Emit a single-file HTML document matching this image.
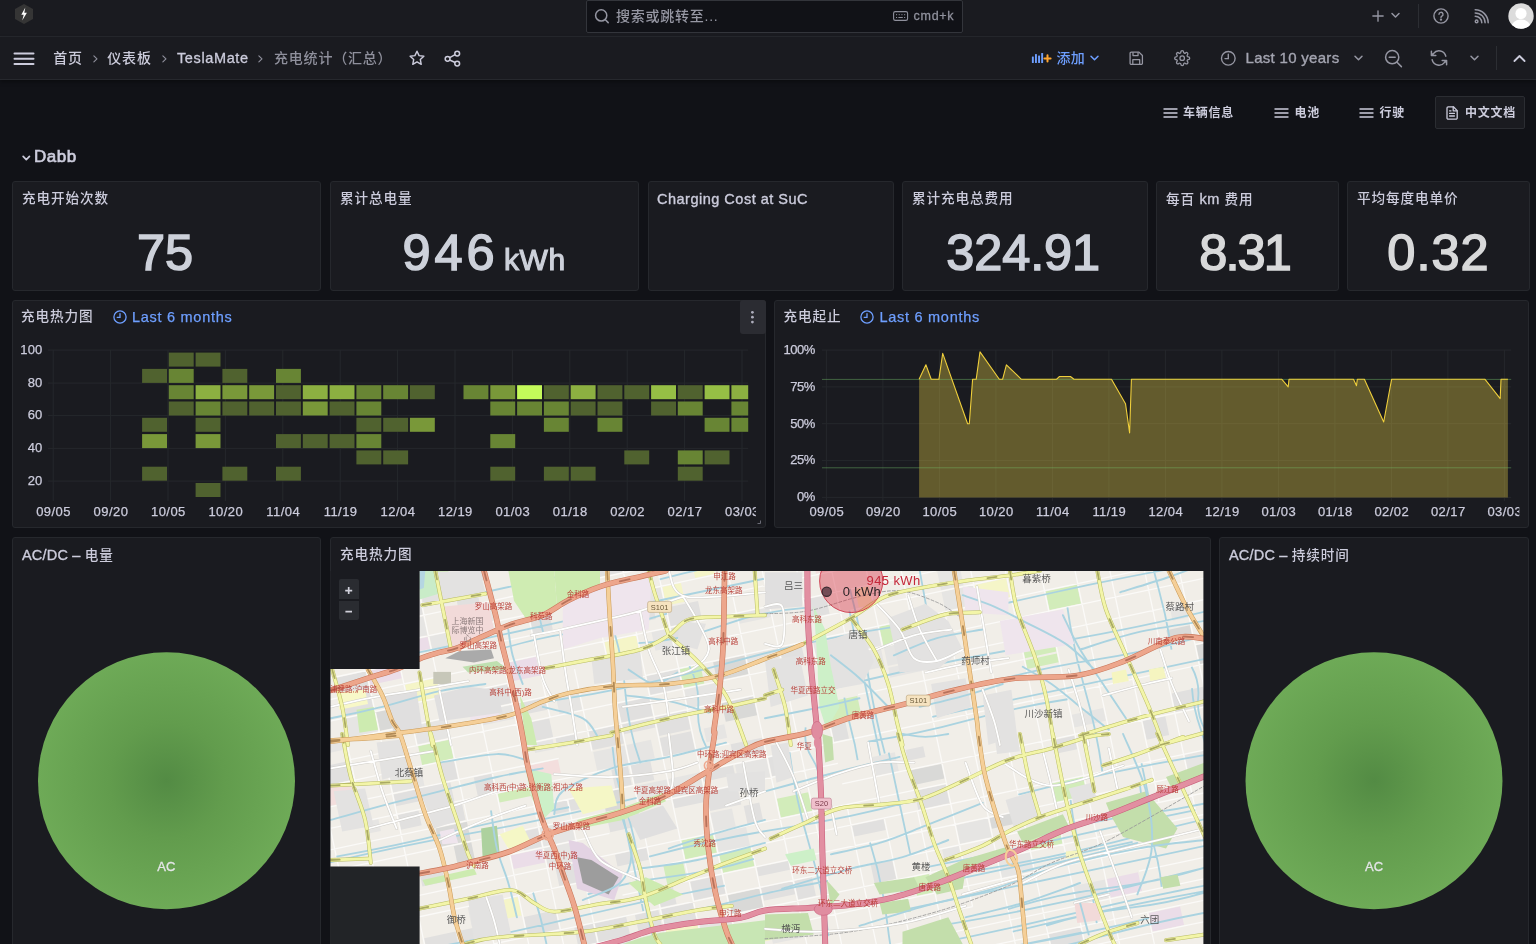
<!DOCTYPE html>
<html lang="zh">
<head>
<meta charset="utf-8">
<title>充电统计（汇总） - TeslaMate - Grafana</title>
<style>
*{box-sizing:border-box;margin:0;padding:0}
html,body{width:1536px;height:944px;overflow:hidden;background:#111217;color:#ccccdc;
  font-family:"Liberation Sans","Noto Sans CJK SC",sans-serif;font-size:14px}
#root{position:absolute;left:0;top:0;width:1536px;height:944px;will-change:transform}
.abs{position:absolute}
#top{position:absolute;left:0;top:0;width:1536px;height:37px;background:#1a1b20;border-bottom:1px solid #26282d}
#bar2{position:absolute;left:0;top:37px;width:1536px;height:43px;background:#1a1b20;border-bottom:1px solid #26282d;box-shadow:0 2px 4px rgba(0,0,0,.35)}
.t{position:absolute;white-space:nowrap;line-height:20px}
.panel{position:absolute;background:#1a1b20;border:1px solid #26282d;border-radius:3px}
.ptitle{position:absolute;left:9px;top:7px;font-size:13.6px;letter-spacing:.9px;font-weight:500;line-height:20px;white-space:nowrap;color:#ccccdc}
.ptitle .l,.l{font-size:14.5px;letter-spacing:.5px;-webkit-text-stroke:.35px #ccccdc}
.big{position:absolute;white-space:nowrap;color:#cdd1da;-webkit-text-stroke:1.5px #cdd1da}
svg{position:absolute;overflow:visible}
</style>
</head>
<body>
<div id="root">
<!--TOPBAR-->
<div id="top">
 <svg style="left:15px;top:4px" width="18" height="20" viewBox="0 0 18 20"><path d="M9 0 L18 5 V15 L9 20 L0 15 V5 Z" fill="#353535"/><path d="M10.3 3.4 L6.3 10.7 H8.7 L7.2 16.6 L11.9 8.7 H9.3 Z" fill="#fff"/></svg>
 <div class="abs" style="left:586px;top:0;width:377px;height:33px;background:#111217;border:1px solid #33353b;border-radius:2px"></div>
 <svg style="left:594px;top:8px" width="16" height="16" viewBox="0 0 16 16" fill="none" stroke="#9596a2" stroke-width="1.5" stroke-linecap="round"><circle cx="7.2" cy="7.4" r="5.6"/><path d="M11.4 11.8 L14.2 14.6"/></svg>
 <div class="t" style="left:616px;top:6px;font-size:14px;font-weight:500;color:#9697a3;letter-spacing:.75px">搜索或跳转至...</div>
 <svg style="left:893px;top:11px" width="15.2" height="10" viewBox="0 0 15.2 10" fill="none" stroke="#8f909c" stroke-width="1.1"><rect x=".6" y=".6" width="14" height="8.8" rx="1.7"/><path d="M3 3.7h1.1M5.7 3.7h1.1M8.4 3.7h1.1M11.1 3.7h1.1M3 6.5h1.1M5.4 6.5h4.4M11.1 6.5h1.1" stroke-width="1"/></svg>
 <div class="t" style="left:913.6px;top:6px;font-size:12.5px;letter-spacing:.7px;color:#8f909c;-webkit-text-stroke:.3px #8f909c">cmd+k</div>
 <svg style="left:1372px;top:10px" width="12" height="12" viewBox="0 0 14 14" stroke="#9596a2" stroke-width="1.6" stroke-linecap="round"><path d="M7 1v12M1 7h12"/></svg>
 <svg style="left:1391px;top:12px" width="9" height="7" viewBox="0 0 9 7" fill="none" stroke="#9596a2" stroke-width="1.5" stroke-linecap="round" stroke-linejoin="round"><path d="M1 1.5 L4.5 5 L8 1.5"/></svg>
 <div class="abs" style="left:1418px;top:4px;width:1px;height:24px;background:#2c2e33"></div>
 <svg style="left:1433px;top:8px" width="16" height="16" viewBox="0 0 16 16" fill="none" stroke="#9596a2" stroke-width="1.4" stroke-linecap="round"><circle cx="8" cy="8" r="7.1"/><path d="M6 6.3 a2 2 0 1 1 2.9 1.8 c-.6.3-.9.7-.9 1.4"/><circle cx="8" cy="11.6" r=".5" fill="#9596a2"/></svg>
 <svg style="left:1474px;top:9px" width="15" height="15" viewBox="0 0 15 15" fill="none" stroke="#9596a2" stroke-width="1.5" stroke-linecap="round"><circle cx="2.6" cy="12.4" r="1.3"/><path d="M1.2 7.2 a6.6 6.6 0 0 1 6.6 6.6M1.2 3.9 a9.9 9.9 0 0 1 9.9 9.9M1.2 .8 a13 13 0 0 1 13 13"/></svg>
 <svg style="left:1508px;top:3px" width="26" height="26" viewBox="0 0 26 26"><defs><clipPath id="avc"><circle cx="13" cy="13" r="12.7"/></clipPath></defs><circle cx="13" cy="13" r="12.7" fill="#dcdcdc"/><g clip-path="url(#avc)" fill="#fff"><circle cx="13" cy="10.5" r="5.6"/><ellipse cx="13" cy="25" rx="10" ry="8.5"/></g></svg>
</div>
<div id="bar2">
 <svg style="left:13px;top:15px" width="22" height="14" viewBox="0 0 22 14" stroke="#ccccdc" stroke-width="2" stroke-linecap="round"><path d="M1.5 1.5h19M1.5 6.7h19M1.5 12h19"/></svg>
 <div class="t" style="left:53.3px;top:11px;font-size:14px;font-weight:500;letter-spacing:.8px">首页</div>
 <svg style="left:92.6px;top:17.6px" width="5.2" height="7.8" viewBox="0 0 6 9" fill="none" stroke="#8f909c" stroke-width="1.3" stroke-linecap="round" stroke-linejoin="round"><path d="M1 1 L4.6 4.5 L1 8"/></svg>
 <div class="t" style="left:107.3px;top:11px;font-size:14px;font-weight:500;letter-spacing:.8px">仪表板</div>
 <svg style="left:161.6px;top:17.6px" width="5.2" height="7.8" viewBox="0 0 6 9" fill="none" stroke="#8f909c" stroke-width="1.3" stroke-linecap="round" stroke-linejoin="round"><path d="M1 1 L4.6 4.5 L1 8"/></svg>
 <div class="t" style="left:177px;top:11px;font-size:14.5px;letter-spacing:.62px;-webkit-text-stroke:.3px #ccccdc">TeslaMate</div>
 <svg style="left:257.6px;top:17.6px" width="5.2" height="7.8" viewBox="0 0 6 9" fill="none" stroke="#8f909c" stroke-width="1.3" stroke-linecap="round" stroke-linejoin="round"><path d="M1 1 L4.6 4.5 L1 8"/></svg>
 <div class="t" style="left:274px;top:11px;font-size:14px;color:#8f909c;font-weight:500;letter-spacing:.8px">充电统计（汇总）</div>
 <svg style="left:409.3px;top:13.4px" width="16" height="16" viewBox="0 0 17 17" fill="none" stroke="#ccccdc" stroke-width="1.5" stroke-linejoin="round"><path d="M8.5 1.3 L10.7 6 L15.8 6.6 L12 10.1 L13 15.2 L8.5 12.6 L4 15.2 L5 10.1 L1.2 6.6 L6.3 6 Z"/></svg>
 <svg style="left:444.3px;top:12.6px" width="17" height="17" viewBox="0 0 17 17" fill="none" stroke="#ccccdc" stroke-width="1.5"><circle cx="3.6" cy="8.8" r="2.4"/><circle cx="13.2" cy="3.6" r="2.4"/><circle cx="13.2" cy="13.6" r="2.4"/><path d="M5.7 7.6 L11.1 4.7M5.7 10 L11.1 12.5"/></svg>

 <svg style="left:1031px;top:14px" width="21" height="14" viewBox="0 0 21 14"><g fill="#6e9fff"><rect x="0.9" y="5.4" width="1.9" height="6.6" rx=".5"/><rect x="4" y="3" width="1.9" height="9" rx=".5"/><rect x="7.1" y="4.6" width="1.9" height="7.4" rx=".5"/><rect x="10.2" y="2" width="1.9" height="10" rx=".5"/></g><path d="M16.5 4.3v6.2M13.4 7.4h6.2" stroke="#ffa530" stroke-width="2" stroke-linecap="round"/></svg>
 <div class="t" style="left:1056.5px;top:11px;font-size:14px;font-weight:500;color:#6e9fff;letter-spacing:.3px">添加</div>
 <svg style="left:1090px;top:18px" width="9" height="7" viewBox="0 0 9 7" fill="none" stroke="#6e9fff" stroke-width="1.5" stroke-linecap="round" stroke-linejoin="round"><path d="M1 1.2 L4.5 4.8 L8 1.2"/></svg>
 <svg style="left:1129px;top:14px" width="14.5" height="14.5" viewBox="0 0 16 16" fill="none" stroke="#9596a2" stroke-width="1.4" stroke-linejoin="round"><path d="M1.2 2.6 a1.4 1.4 0 0 1 1.4-1.4 H11 L14.8 5 V13.4 a1.4 1.4 0 0 1-1.4 1.4 H2.6 a1.4 1.4 0 0 1-1.4-1.4 Z"/><path d="M4.4 1.4 V5 H10 V1.4M4.2 14.6 V9.6 H11.8 V14.6"/></svg>
 <svg style="left:1174px;top:13px" width="16.4" height="16.4" viewBox="0 0 24 24" fill="none" stroke="#9596a2" stroke-width="1.9" stroke-linejoin="round"><circle cx="12" cy="12" r="3.3"/><path d="M19.4 15a1.65 1.65 0 0 0 .33 1.82l.06.06a2 2 0 1 1-2.83 2.83l-.06-.06a1.65 1.65 0 0 0-1.82-.33 1.65 1.65 0 0 0-1 1.51V21a2 2 0 1 1-4 0v-.09A1.65 1.65 0 0 0 9 19.4a1.65 1.65 0 0 0-1.82.33l-.06.06a2 2 0 1 1-2.83-2.83l.06-.06a1.65 1.65 0 0 0 .33-1.82 1.65 1.65 0 0 0-1.51-1H3a2 2 0 1 1 0-4h.09A1.65 1.65 0 0 0 4.6 9a1.65 1.65 0 0 0-.33-1.82l-.06-.06a2 2 0 1 1 2.83-2.83l.06.06a1.65 1.65 0 0 0 1.82.33H9a1.65 1.65 0 0 0 1-1.51V3a2 2 0 1 1 4 0v.09a1.65 1.65 0 0 0 1 1.51 1.65 1.65 0 0 0 1.82-.33l.06-.06a2 2 0 1 1 2.83 2.83l-.06.06a1.65 1.65 0 0 0-.33 1.82V9a1.65 1.65 0 0 0 1.51 1H21a2 2 0 1 1 0 4h-.09a1.65 1.65 0 0 0-1.51 1z"/></svg>
 <svg style="left:1219.8px;top:12.8px" width="16.6" height="16.6" viewBox="0 0 18 18" fill="none" stroke="#9596a2" stroke-width="1.5" stroke-linecap="round"><circle cx="9" cy="9" r="7.4"/><path d="M9 4.6 V9.3 H5.4"/></svg>
 <div class="t" style="left:1245.5px;top:11px;font-size:15px;color:#a4a5b1;letter-spacing:.3px;-webkit-text-stroke:.35px #a4a5b1">Last 10 years</div>
 <svg style="left:1354px;top:18px" width="9" height="7" viewBox="0 0 9 7" fill="none" stroke="#9596a2" stroke-width="1.5" stroke-linecap="round" stroke-linejoin="round"><path d="M1 1.2 L4.5 4.8 L8 1.2"/></svg>
 <svg style="left:1384px;top:12px" width="19" height="19" viewBox="0 0 19 19" fill="none" stroke="#9596a2" stroke-width="1.5" stroke-linecap="round"><circle cx="8.2" cy="8.2" r="6.6"/><path d="M5.2 8.2h6M13 13.2 L17.4 17.6"/></svg>
 <svg style="left:1430px;top:12px" width="18" height="18" viewBox="0 0 18 18" fill="none" stroke="#9596a2" stroke-width="1.5" stroke-linecap="round" stroke-linejoin="round"><path d="M15.8 7.2 A7 7 0 0 0 3.4 4.6 L1.6 6.4M1.4 2.2 V6.6 H5.8M2.2 10.8 A7 7 0 0 0 14.6 13.4 L16.4 11.6M16.6 15.8 V11.4 H12.2"/></svg>
 <svg style="left:1470px;top:18px" width="9" height="7" viewBox="0 0 9 7" fill="none" stroke="#9596a2" stroke-width="1.5" stroke-linecap="round" stroke-linejoin="round"><path d="M1 1.2 L4.5 4.8 L8 1.2"/></svg>
 <div class="abs" style="left:1496px;top:9px;width:1px;height:24px;background:#2c2e33"></div>
 <svg style="left:1513px;top:17px" width="13" height="9" viewBox="0 0 13 9" fill="none" stroke="#ccccdc" stroke-width="1.8" stroke-linecap="round" stroke-linejoin="round"><path d="M1.4 7 L6.5 2 L11.6 7"/></svg>
</div>
<!--/TOPBAR-->
<!--LINKS-->
<svg style="left:1163px;top:108px" width="15" height="10" viewBox="0 0 15 10" stroke="#ccccdc" stroke-width="1.4" stroke-linecap="round"><path d="M1 1h13M1 5h13M1 9h13"/></svg>
<div class="t" style="left:1183px;top:103px;font-size:12px;font-weight:bold;letter-spacing:.75px">车辆信息</div>
<svg style="left:1274px;top:108px" width="15" height="10" viewBox="0 0 15 10" stroke="#ccccdc" stroke-width="1.4" stroke-linecap="round"><path d="M1 1h13M1 5h13M1 9h13"/></svg>
<div class="t" style="left:1294.5px;top:103px;font-size:12px;font-weight:bold;letter-spacing:.75px">电池</div>
<svg style="left:1359px;top:108px" width="15" height="10" viewBox="0 0 15 10" stroke="#ccccdc" stroke-width="1.4" stroke-linecap="round"><path d="M1 1h13M1 5h13M1 9h13"/></svg>
<div class="t" style="left:1379.5px;top:103px;font-size:12px;font-weight:bold;letter-spacing:.75px">行驶</div>
<div class="abs" style="left:1435px;top:96px;width:90px;height:33px;background:#1a1b20;border:1px solid #2b2d32;border-radius:2px"></div>
<svg style="left:1446px;top:106px" width="12" height="14" viewBox="0 0 12 14" fill="none" stroke="#ccccdc" stroke-width="1.3" stroke-linejoin="round" stroke-linecap="round"><path d="M2.2.8 H7.4 L11.2 4.6 V12 a1.2 1.2 0 0 1-1.2 1.2 H2.2 A1.2 1.2 0 0 1 1 12 V2 A1.2 1.2 0 0 1 2.2.8 Z"/><path d="M7.2 1 V4.8 H11M3.6 7.4h4.8M3.6 10h4.8M3.6 4.8h1.4"/></svg>
<div class="t" style="left:1465px;top:103px;font-size:12px;font-weight:bold;letter-spacing:.75px">中文文档</div>
<svg style="left:21.6px;top:155.3px" width="8.6" height="6.7" viewBox="0 0 9 7" fill="none" stroke="#ccccdc" stroke-width="1.8" stroke-linecap="round" stroke-linejoin="round"><path d="M1.2 1.4 L4.5 4.8 L7.8 1.4"/></svg>
<div class="t" style="left:34px;top:146px;font-size:17px;letter-spacing:.5px;-webkit-text-stroke:.65px #ccccdc;line-height:22px">Dabb</div>
<!--/LINKS-->
<!--STATS-->
<div class="panel" style="left:12px;top:181px;width:309px;height:110px"><div class="ptitle">充电开始次数</div><div class="big" style="left:124px;top:41px;font-size:50.5px;line-height:60px">75</div></div>
<div class="panel" style="left:330px;top:181px;width:309px;height:110px"><div class="ptitle">累计总电量</div><div class="big" style="left:71.5px;top:41px;font-size:50.5px;line-height:60px;letter-spacing:3.95px">946</div><div class="big" style="left:173px;top:40px;font-size:30px;letter-spacing:.6px;line-height:60px;padding-top:8px;-webkit-text-stroke-width:1.1px">kWh</div></div>
<div class="panel" style="left:648px;top:181px;width:246px;height:110px"><div class="ptitle" style="left:8px"><span class="l">Charging Cost at SuC</span></div></div>
<div class="panel" style="left:902px;top:181px;width:246px;height:110px"><div class="ptitle">累计充电总费用</div><div class="big" style="left:43.2px;top:41px;font-size:50.5px;line-height:60px;letter-spacing:-.1px">324.91</div></div>
<div class="panel" style="left:1156px;top:181px;width:183px;height:110px"><div class="ptitle">每百<span class="l"> km </span>费用</div><div class="big" style="left:42.3px;top:41px;font-size:50.5px;line-height:60px;letter-spacing:-1.9px;color:#d8d9da;-webkit-text-stroke-color:#d8d9da">8.31</div></div>
<div class="panel" style="left:1347px;top:181px;width:183px;height:110px"><div class="ptitle">平均每度电单价</div><div class="big" style="left:39.3px;top:41px;font-size:50.5px;line-height:60px;letter-spacing:1px;color:#d8d9da;-webkit-text-stroke-color:#d8d9da">0.32</div></div>
<!--/STATS-->
<!--ROW2-->
<div class="panel" style="left:12px;top:299.5px;width:754px;height:228.5px"></div>
<div class="t" style="left:21px;top:307px;font-size:13.6px;letter-spacing:.9px;font-weight:500">充电热力图</div>
<svg style="left:112.5px;top:310px" width="14" height="14" viewBox="0 0 14 14" fill="none" stroke="#6e9fff" stroke-width="1.3" stroke-linecap="round"><circle cx="7" cy="7" r="6.1"/><path d="M7 3.6V7.3H4.2"/></svg>
<div class="t" style="left:132px;top:306.5px;font-size:14.5px;color:#6e9fff;letter-spacing:.72px;-webkit-text-stroke:.25px #6e9fff">Last 6 months</div>
<div class="abs" style="left:740px;top:299.6px;width:26px;height:34.2px;background:#2b2c32;border-radius:3px"></div>
<svg style="left:750px;top:309px" width="5" height="16" viewBox="0 0 5 16" fill="#adadbc"><circle cx="2.4" cy="3.3" r="1.4"/><circle cx="2.4" cy="8.2" r="1.4"/><circle cx="2.4" cy="13.1" r="1.4"/></svg>
<div class="panel" style="left:774px;top:299.5px;width:755px;height:228.5px"></div>
<div class="t" style="left:783.5px;top:307px;font-size:13.6px;letter-spacing:.9px;font-weight:500">充电起止</div>
<svg style="left:860px;top:310px" width="14" height="14" viewBox="0 0 14 14" fill="none" stroke="#6e9fff" stroke-width="1.3" stroke-linecap="round"><circle cx="7" cy="7" r="6.1"/><path d="M7 3.6V7.3H4.2"/></svg>
<div class="t" style="left:879.5px;top:306.5px;font-size:14.5px;color:#6e9fff;letter-spacing:.72px;-webkit-text-stroke:.25px #6e9fff">Last 6 months</div>
<svg style="left:0;top:0" width="1536" height="944" viewBox="0 0 1536 944">
<defs><clipPath id="hmclip"><rect x="48" y="345" width="700.2" height="160"/></clipPath><clipPath id="hmx"><rect x="20" y="500" width="735.8" height="26"/></clipPath><clipPath id="tsx"><rect x="790" y="500" width="729.3" height="26"/></clipPath></defs>
<path d="M48 350.1H748.2 M48 383.1H748.2 M48 415.6H748.2 M48 448.4H748.2 M48 481.1H748.2 M53.2 350V501 M110.6 350V501 M168.0 350V501 M225.4 350V501 M282.8 350V501 M340.2 350V501 M397.6 350V501 M455.0 350V501 M512.4 350V501 M569.8 350V501 M627.2 350V501 M684.6 350V501 M742.0 350V501" stroke="#25282c" stroke-width="1" fill="none"/>
<g clip-path="url(#hmclip)">
<rect x="168.8" y="352.6" width="24.9" height="14" fill="#50622f"/>
<rect x="195.6" y="352.6" width="24.9" height="14" fill="#50622f"/>
<rect x="142.1" y="368.9" width="24.9" height="14" fill="#50622f"/>
<rect x="168.8" y="368.9" width="24.9" height="14" fill="#688534"/>
<rect x="222.4" y="368.9" width="24.9" height="14" fill="#50622f"/>
<rect x="276.0" y="368.9" width="24.9" height="14" fill="#688534"/>
<rect x="168.8" y="385.2" width="24.9" height="14" fill="#688534"/>
<rect x="195.6" y="385.2" width="24.9" height="14" fill="#8cb041"/>
<rect x="222.4" y="385.2" width="24.9" height="14" fill="#799839"/>
<rect x="249.2" y="385.2" width="24.9" height="14" fill="#799839"/>
<rect x="276.0" y="385.2" width="24.9" height="14" fill="#50622f"/>
<rect x="302.8" y="385.2" width="24.9" height="14" fill="#8cb041"/>
<rect x="329.6" y="385.2" width="24.9" height="14" fill="#8cb041"/>
<rect x="356.4" y="385.2" width="24.9" height="14" fill="#688534"/>
<rect x="383.2" y="385.2" width="24.9" height="14" fill="#688534"/>
<rect x="409.9" y="385.2" width="24.9" height="14" fill="#50622f"/>
<rect x="463.5" y="385.2" width="24.9" height="14" fill="#688534"/>
<rect x="490.3" y="385.2" width="24.9" height="14" fill="#799839"/>
<rect x="517.1" y="385.2" width="24.9" height="14" fill="#c4fa5a"/>
<rect x="543.9" y="385.2" width="24.9" height="14" fill="#50622f"/>
<rect x="570.7" y="385.2" width="24.9" height="14" fill="#8cb041"/>
<rect x="597.5" y="385.2" width="24.9" height="14" fill="#50622f"/>
<rect x="624.3" y="385.2" width="24.9" height="14" fill="#50622f"/>
<rect x="651.1" y="385.2" width="24.9" height="14" fill="#96bf45"/>
<rect x="677.8" y="385.2" width="24.9" height="14" fill="#50622f"/>
<rect x="704.6" y="385.2" width="24.9" height="14" fill="#96bf45"/>
<rect x="731.4" y="385.2" width="24.9" height="14" fill="#8cb041"/>
<rect x="168.8" y="401.5" width="24.9" height="14" fill="#50622f"/>
<rect x="195.6" y="401.5" width="24.9" height="14" fill="#688534"/>
<rect x="222.4" y="401.5" width="24.9" height="14" fill="#50622f"/>
<rect x="249.2" y="401.5" width="24.9" height="14" fill="#50622f"/>
<rect x="276.0" y="401.5" width="24.9" height="14" fill="#50622f"/>
<rect x="302.8" y="401.5" width="24.9" height="14" fill="#799839"/>
<rect x="329.6" y="401.5" width="24.9" height="14" fill="#50622f"/>
<rect x="356.4" y="401.5" width="24.9" height="14" fill="#688534"/>
<rect x="490.3" y="401.5" width="24.9" height="14" fill="#688534"/>
<rect x="517.1" y="401.5" width="24.9" height="14" fill="#688534"/>
<rect x="543.9" y="401.5" width="24.9" height="14" fill="#688534"/>
<rect x="570.7" y="401.5" width="24.9" height="14" fill="#50622f"/>
<rect x="597.5" y="401.5" width="24.9" height="14" fill="#50622f"/>
<rect x="651.1" y="401.5" width="24.9" height="14" fill="#50622f"/>
<rect x="677.8" y="401.5" width="24.9" height="14" fill="#688534"/>
<rect x="731.4" y="401.5" width="24.9" height="14" fill="#688534"/>
<rect x="142.1" y="417.8" width="24.9" height="14" fill="#50622f"/>
<rect x="195.6" y="417.8" width="24.9" height="14" fill="#50622f"/>
<rect x="356.4" y="417.8" width="24.9" height="14" fill="#50622f"/>
<rect x="383.2" y="417.8" width="24.9" height="14" fill="#50622f"/>
<rect x="409.9" y="417.8" width="24.9" height="14" fill="#799839"/>
<rect x="543.9" y="417.8" width="24.9" height="14" fill="#688534"/>
<rect x="597.5" y="417.8" width="24.9" height="14" fill="#688534"/>
<rect x="704.6" y="417.8" width="24.9" height="14" fill="#688534"/>
<rect x="731.4" y="417.8" width="24.9" height="14" fill="#688534"/>
<rect x="142.1" y="434.1" width="24.9" height="14" fill="#799839"/>
<rect x="195.6" y="434.1" width="24.9" height="14" fill="#799839"/>
<rect x="276.0" y="434.1" width="24.9" height="14" fill="#50622f"/>
<rect x="302.8" y="434.1" width="24.9" height="14" fill="#50622f"/>
<rect x="329.6" y="434.1" width="24.9" height="14" fill="#50622f"/>
<rect x="356.4" y="434.1" width="24.9" height="14" fill="#688534"/>
<rect x="490.3" y="434.1" width="24.9" height="14" fill="#688534"/>
<rect x="356.4" y="450.4" width="24.9" height="14" fill="#50622f"/>
<rect x="383.2" y="450.4" width="24.9" height="14" fill="#50622f"/>
<rect x="624.3" y="450.4" width="24.9" height="14" fill="#50622f"/>
<rect x="677.8" y="450.4" width="24.9" height="14" fill="#688534"/>
<rect x="704.6" y="450.4" width="24.9" height="14" fill="#50622f"/>
<rect x="142.1" y="466.7" width="24.9" height="14" fill="#50622f"/>
<rect x="222.4" y="466.7" width="24.9" height="14" fill="#50622f"/>
<rect x="276.0" y="466.7" width="24.9" height="14" fill="#50622f"/>
<rect x="490.3" y="466.7" width="24.9" height="14" fill="#50622f"/>
<rect x="543.9" y="466.7" width="24.9" height="14" fill="#50622f"/>
<rect x="570.7" y="466.7" width="24.9" height="14" fill="#50622f"/>
<rect x="677.8" y="466.7" width="24.9" height="14" fill="#50622f"/>
<rect x="195.6" y="483.0" width="24.9" height="14" fill="#50622f"/>
</g>
<text x="42.3" y="353.9" text-anchor="end" font-size="13" fill="#ccccdc" letter-spacing=".1" stroke="#ccccdc" stroke-width=".25">100</text>
<text x="42.3" y="386.9" text-anchor="end" font-size="13" fill="#ccccdc" letter-spacing=".1" stroke="#ccccdc" stroke-width=".25">80</text>
<text x="42.3" y="419.4" text-anchor="end" font-size="13" fill="#ccccdc" letter-spacing=".1" stroke="#ccccdc" stroke-width=".25">60</text>
<text x="42.3" y="452.2" text-anchor="end" font-size="13" fill="#ccccdc" letter-spacing=".1" stroke="#ccccdc" stroke-width=".25">40</text>
<text x="42.3" y="484.9" text-anchor="end" font-size="13" fill="#ccccdc" letter-spacing=".1" stroke="#ccccdc" stroke-width=".25">20</text>
<g clip-path="url(#hmx)">
<text x="53.6" y="515.8" text-anchor="middle" font-size="13" fill="#ccccdc" letter-spacing=".45" stroke="#ccccdc" stroke-width=".25">09/05</text>
<text x="111.0" y="515.8" text-anchor="middle" font-size="13" fill="#ccccdc" letter-spacing=".45" stroke="#ccccdc" stroke-width=".25">09/20</text>
<text x="168.4" y="515.8" text-anchor="middle" font-size="13" fill="#ccccdc" letter-spacing=".45" stroke="#ccccdc" stroke-width=".25">10/05</text>
<text x="225.8" y="515.8" text-anchor="middle" font-size="13" fill="#ccccdc" letter-spacing=".45" stroke="#ccccdc" stroke-width=".25">10/20</text>
<text x="283.2" y="515.8" text-anchor="middle" font-size="13" fill="#ccccdc" letter-spacing=".45" stroke="#ccccdc" stroke-width=".25">11/04</text>
<text x="340.6" y="515.8" text-anchor="middle" font-size="13" fill="#ccccdc" letter-spacing=".45" stroke="#ccccdc" stroke-width=".25">11/19</text>
<text x="398.0" y="515.8" text-anchor="middle" font-size="13" fill="#ccccdc" letter-spacing=".45" stroke="#ccccdc" stroke-width=".25">12/04</text>
<text x="455.4" y="515.8" text-anchor="middle" font-size="13" fill="#ccccdc" letter-spacing=".45" stroke="#ccccdc" stroke-width=".25">12/19</text>
<text x="512.8" y="515.8" text-anchor="middle" font-size="13" fill="#ccccdc" letter-spacing=".45" stroke="#ccccdc" stroke-width=".25">01/03</text>
<text x="570.2" y="515.8" text-anchor="middle" font-size="13" fill="#ccccdc" letter-spacing=".45" stroke="#ccccdc" stroke-width=".25">01/18</text>
<text x="627.6" y="515.8" text-anchor="middle" font-size="13" fill="#ccccdc" letter-spacing=".45" stroke="#ccccdc" stroke-width=".25">02/02</text>
<text x="685.0" y="515.8" text-anchor="middle" font-size="13" fill="#ccccdc" letter-spacing=".45" stroke="#ccccdc" stroke-width=".25">02/17</text>
<text x="742.4" y="515.8" text-anchor="middle" font-size="13" fill="#ccccdc" letter-spacing=".45" stroke="#ccccdc" stroke-width=".25">03/03</text>
</g>
<path d="M757.5 523.5H760.5V520.5" stroke="#6a6b75" stroke-width="1" fill="none"/>
<path d="M822 350.1H1511.2 M822 386.9H1511.2 M822 423.7H1511.2 M822 460.6H1511.2 M822 497.4H1511.2 M826.4 350V501 M882.9 350V501 M939.4 350V501 M995.9 350V501 M1052.4 350V501 M1108.9 350V501 M1165.4 350V501 M1221.9 350V501 M1278.4 350V501 M1334.9 350V501 M1391.4 350V501 M1447.9 350V501 M1504.4 350V501" stroke="#25282c" stroke-width="1" fill="none"/>
<path d="M919.1 379.3 L925.9 364.8 L931.2 379.3 L938.9 379.3 L942.7 353.4 L967.6 423.7 L969.3 423.7 L972.6 379.3 L976.2 379.3 L980.0 351.9 L999.3 379.3 L1002.6 379.3 L1006.4 364.8 L1021.4 379.3 L1056.4 379.3 L1059.5 376.5 L1070.4 376.5 L1074.0 379.3 L1111.5 379.3 L1125.5 403.7 L1129.6 432.9 L1131.4 379.3 L1281.9 379.3 L1288.2 386.9 L1289.0 379.3 L1353.5 379.3 L1356.5 385.7 L1357.3 379.3 L1364.4 379.3 L1383.7 422.0 L1391.6 379.3 L1485.0 379.3 L1500.2 398.6 L1501.0 379.3 L1507.9 379.3 L1507.9 497.4 L919.1 497.4 Z" fill="rgba(250,222,72,0.33)" stroke="none"/>
<path d="M822 379.4H1511.2M822 467.8H1511.2" stroke="rgba(115,191,105,0.45)" stroke-width="1" fill="none"/>
<path d="M919.1 379.3 L925.9 364.8 L931.2 379.3 L938.9 379.3 L942.7 353.4 L967.6 423.7 L969.3 423.7 L972.6 379.3 L976.2 379.3 L980.0 351.9 L999.3 379.3 L1002.6 379.3 L1006.4 364.8 L1021.4 379.3 L1056.4 379.3 L1059.5 376.5 L1070.4 376.5 L1074.0 379.3 L1111.5 379.3 L1125.5 403.7 L1129.6 432.9 L1131.4 379.3 L1281.9 379.3 L1288.2 386.9 L1289.0 379.3 L1353.5 379.3 L1356.5 385.7 L1357.3 379.3 L1364.4 379.3 L1383.7 422.0 L1391.6 379.3 L1485.0 379.3 L1500.2 398.6 L1501.0 379.3 L1507.9 379.3" fill="none" stroke="#efcf3c" stroke-width="1.1" stroke-linejoin="round"/>
<text x="814.9" y="353.9" text-anchor="end" font-size="13" fill="#ccccdc" letter-spacing="-.45" stroke="#ccccdc" stroke-width=".25">100%</text>
<text x="814.9" y="390.7" text-anchor="end" font-size="13" fill="#ccccdc" letter-spacing="-.45" stroke="#ccccdc" stroke-width=".25">75%</text>
<text x="814.9" y="427.5" text-anchor="end" font-size="13" fill="#ccccdc" letter-spacing="-.45" stroke="#ccccdc" stroke-width=".25">50%</text>
<text x="814.9" y="464.4" text-anchor="end" font-size="13" fill="#ccccdc" letter-spacing="-.45" stroke="#ccccdc" stroke-width=".25">25%</text>
<text x="814.9" y="501.2" text-anchor="end" font-size="13" fill="#ccccdc" letter-spacing="-.45" stroke="#ccccdc" stroke-width=".25">0%</text>
<g clip-path="url(#tsx)">
<text x="826.8" y="515.8" text-anchor="middle" font-size="13" fill="#ccccdc" letter-spacing=".45" stroke="#ccccdc" stroke-width=".25">09/05</text>
<text x="883.3" y="515.8" text-anchor="middle" font-size="13" fill="#ccccdc" letter-spacing=".45" stroke="#ccccdc" stroke-width=".25">09/20</text>
<text x="939.8" y="515.8" text-anchor="middle" font-size="13" fill="#ccccdc" letter-spacing=".45" stroke="#ccccdc" stroke-width=".25">10/05</text>
<text x="996.3" y="515.8" text-anchor="middle" font-size="13" fill="#ccccdc" letter-spacing=".45" stroke="#ccccdc" stroke-width=".25">10/20</text>
<text x="1052.8" y="515.8" text-anchor="middle" font-size="13" fill="#ccccdc" letter-spacing=".45" stroke="#ccccdc" stroke-width=".25">11/04</text>
<text x="1109.3" y="515.8" text-anchor="middle" font-size="13" fill="#ccccdc" letter-spacing=".45" stroke="#ccccdc" stroke-width=".25">11/19</text>
<text x="1165.8" y="515.8" text-anchor="middle" font-size="13" fill="#ccccdc" letter-spacing=".45" stroke="#ccccdc" stroke-width=".25">12/04</text>
<text x="1222.3" y="515.8" text-anchor="middle" font-size="13" fill="#ccccdc" letter-spacing=".45" stroke="#ccccdc" stroke-width=".25">12/19</text>
<text x="1278.8" y="515.8" text-anchor="middle" font-size="13" fill="#ccccdc" letter-spacing=".45" stroke="#ccccdc" stroke-width=".25">01/03</text>
<text x="1335.3" y="515.8" text-anchor="middle" font-size="13" fill="#ccccdc" letter-spacing=".45" stroke="#ccccdc" stroke-width=".25">01/18</text>
<text x="1391.8" y="515.8" text-anchor="middle" font-size="13" fill="#ccccdc" letter-spacing=".45" stroke="#ccccdc" stroke-width=".25">02/02</text>
<text x="1448.3" y="515.8" text-anchor="middle" font-size="13" fill="#ccccdc" letter-spacing=".45" stroke="#ccccdc" stroke-width=".25">02/17</text>
<text x="1504.8" y="515.8" text-anchor="middle" font-size="13" fill="#ccccdc" letter-spacing=".45" stroke="#ccccdc" stroke-width=".25">03/03</text>
</g>
</svg>
<!--/ROW2-->
<!--ROW3-->
<div class="panel" style="left:12px;top:536.5px;width:309px;height:420px"><div class="ptitle"><span class="l" style="letter-spacing:.2px">AC/DC – </span>电量</div></div>
<div class="panel" style="left:330px;top:536.5px;width:881px;height:420px"><div class="ptitle">充电热力图</div></div>
<div class="panel" style="left:1219px;top:536.5px;width:310px;height:420px"><div class="ptitle"><span class="l" style="letter-spacing:.2px">AC/DC – </span>持续时间</div></div>
<svg style="left:0;top:0" width="1536" height="944" viewBox="0 0 1536 944"><defs><radialGradient id="pg" cx="50%" cy="50%" r="50%"><stop offset="0" stop-color="#538b44"/><stop offset=".45" stop-color="#629c4d"/><stop offset="1" stop-color="#6eaa57"/></radialGradient></defs><circle cx="166.5" cy="780.7" r="128.5" fill="url(#pg)"/><circle cx="1374" cy="780.7" r="128.5" fill="url(#pg)"/><text x="166.3" y="870.9" text-anchor="middle" font-size="13" fill="#e4e5e8" stroke="#e4e5e8" stroke-width=".3">AC</text><text x="1374" y="870.9" text-anchor="middle" font-size="13" fill="#e4e5e8" stroke="#e4e5e8" stroke-width=".3">AC</text></svg>
<svg style="left:0;top:0" width="1536" height="944" viewBox="0 0 1536 944">
<defs><clipPath id="mapclip"><path d="M419.6 571H1203.4V944H419.6V866.4H330.5V669H419.6Z"/></clipPath><filter id="lb" x="0" y="0" width="100%" height="100%" filterUnits="userSpaceOnUse"><feGaussianBlur stdDeviation="0.3"/></filter><filter id="mb" x="0" y="0" width="100%" height="100%" filterUnits="userSpaceOnUse"><feGaussianBlur stdDeviation="0.5"/></filter></defs>
<rect x="330.5" y="571" width="89.10000000000002" height="98" fill="#1a1b20"/>
<rect x="330.5" y="866.4" width="89.10000000000002" height="77.60000000000002" fill="#222427"/>
<g clip-path="url(#mapclip)"><g filter="url(#mb)">
<rect x="328.5" y="569" width="876.9000000000001" height="377" fill="#f1eee8"/>
<g transform="rotate(-12 767 757)">
<path d="M258 506h32v12h-32z M258 527h32v12h-32z M258 548h32v19h-32z M258 569h32v19h-32z M268 674h22v19h-22z M258 716h32v19h-32z M258 947h32v12h-32z M267 968h23v11h-23z M307 611h17v19h-17z M292 632h32v19h-32z M303 821h21v10h-21z M310 842h14v11h-14z M292 884h24v19h-24z M292 926h17v9h-17z M326 527h23v19h-23z M326 548h32v19h-32z M326 674h32v19h-32z M341 716h16v19h-16z M360 590h32v19h-32z M360 611h32v19h-32z M394 548h32v11h-32z M394 716h32v12h-32z M394 737h21v15h-21z M403 800h23v12h-23z M394 863h32v19h-32z M394 905h32v19h-32z M428 506h32v10h-32z M442 527h18v19h-18z M444 695h16v19h-16z M428 716h24v19h-24z M440 737h19v19h-19z M428 863h17v19h-17z M428 968h32v13h-32z M476 716h18v19h-18z M505 506h22v19h-22z M496 527h22v19h-22z M503 632h25v19h-25z M510 779h18v19h-18z M496 863h32v19h-32z M530 653h32v12h-32z M530 674h32v19h-32z M547 758h15v11h-15z M537 821h25v19h-25z M543 884h19v19h-19z M530 947h32v19h-32z M564 506h32v19h-32z M564 569h20v19h-20z M564 695h21v10h-21z M564 758h32v11h-32z M564 884h32v19h-32z M564 905h32v19h-32z M564 926h32v19h-32z M564 947h19v14h-19z M598 695h32v19h-32z M612 737h17v19h-17z M598 779h32v19h-32z M598 821h32v12h-32z M605 884h24v19h-24z M598 926h32v19h-32z M632 527h32v19h-32z M632 569h32v19h-32z M632 674h32v19h-32z M632 695h32v10h-32z M632 737h20v19h-20z M632 863h16v19h-16z M632 884h32v19h-32z M632 968h16v19h-16z M666 590h21v9h-21z M666 653h32v19h-32z M666 695h32v19h-32z M666 716h32v19h-32z M666 779h32v9h-32z M666 863h32v19h-32z M666 926h32v19h-32z M666 968h32v19h-32z M700 590h32v19h-32z M700 611h22v12h-22z M700 758h32v10h-32z M700 779h32v19h-32z M734 506h32v19h-32z M734 527h25v19h-25z M734 737h32v14h-32z M734 800h16v19h-16z M734 863h32v9h-32z M734 884h32v13h-32z M734 947h21v19h-21z M734 968h21v19h-21z M768 758h15v19h-15z M768 884h18v19h-18z M802 653h22v19h-22z M836 611h22v19h-22z M836 737h15v19h-15z M836 842h32v11h-32z M846 884h22v19h-22z M904 779h18v11h-18z M904 821h32v19h-32z M1006 989h32v19h-32z M1049 800h23v14h-23z M1142 506h16v19h-16z M1142 800h23v19h-23z M1176 611h32v19h-32z M1176 779h32v19h-32z M1176 947h32v19h-32z M1176 968h32v14h-32z M1210 506h32v19h-32z M1244 548h32v19h-32z" fill="#e1e0df"/>
<path d="M266 611h24v10h-24z M258 779h19v12h-19z M326 926h32v10h-32z M394 632h32v19h-32z M428 758h32v19h-32z M442 779h18v19h-18z M607 506h23v14h-23z M598 527h32v11h-32z M615 569h15v19h-15z M598 758h18v19h-18z M700 884h32v19h-32z M734 653h32v19h-32z M734 695h32v19h-32z M904 800h32v15h-32z M972 863h32v11h-32z M1184 716h24v13h-24z M1210 737h32v19h-32z" fill="#d9d9d7"/>
<path d="M258 632h21v19h-21z M326 905h23v19h-23z M428 611h32v19h-32z M462 842h32v19h-32z M632 611h32v19h-32z M632 905h32v19h-32z M700 569h19v19h-19z M700 926h32v11h-32z M734 548h20v19h-20z M888 611h14v19h-14z M1006 632h32v19h-32z M1210 548h32v19h-32z" fill="#f5f5c8"/>
<path d="M258 737h32v19h-32z M258 800h32v19h-32z M258 842h32v19h-32z M292 506h32v19h-32z M292 569h32v19h-32z M292 989h20v19h-20z M326 653h32v9h-32z M326 842h32v19h-32z M360 506h14v19h-14z M360 632h32v19h-32z M360 737h14v12h-14z M360 800h32v19h-32z M360 821h17v19h-17z M360 905h32v19h-32z M360 947h32v19h-32z M394 527h32v19h-32z M394 569h32v19h-32z M394 695h32v19h-32z M442 548h18v19h-18z M428 653h32v19h-32z M443 842h17v19h-17z M462 569h32v19h-32z M462 947h32v19h-32z M496 548h32v19h-32z M496 653h32v14h-32z M513 905h15v19h-15z M541 695h20v10h-20z M530 779h32v19h-32z M530 800h32v19h-32z M573 653h23v19h-23z M598 548h32v11h-32z M598 716h32v19h-32z M632 716h25v19h-25z M632 758h32v19h-32z M632 926h32v19h-32z M666 569h32v11h-32z M680 611h18v19h-18z M666 758h32v19h-32z M666 905h32v19h-32z M666 947h32v19h-32z M700 674h32v19h-32z M711 716h21v14h-21z M700 800h22v19h-22z M700 821h32v19h-32z M734 758h32v19h-32z M734 926h32v15h-32z M768 611h32v10h-32z M768 653h32v10h-32z M836 653h32v19h-32z M836 989h32v19h-32z M870 653h32v19h-32z M878 674h23v19h-23z M870 779h23v19h-23z M904 674h32v19h-32z M904 695h32v10h-32z M919 884h17v12h-17z M938 506h32v19h-32z M938 863h32v19h-32z M972 548h32v19h-32z M972 611h23v19h-23z M972 632h32v19h-32z M972 905h32v19h-32z M1040 947h32v19h-32z M1086 569h19v19h-19z M1074 779h32v13h-32z M1176 548h16v19h-16z M1192 695h16v13h-16z M1176 842h32v19h-32z M1244 779h32v13h-32z" fill="#e6e5e3"/>
<path d="M258 863h32v19h-32z M292 779h32v19h-32z M292 863h32v11h-32z M360 569h32v11h-32z M402 947h24v19h-24z M428 674h32v19h-32z M462 506h32v19h-32z M496 569h25v12h-25z M496 737h32v9h-32z M643 842h20v19h-20z M666 506h32v19h-32z M666 821h32v19h-32z M700 653h21v19h-21z M700 842h32v19h-32z M709 968h23v19h-23z M768 800h32v19h-32z M836 716h32v19h-32z M885 905h16v19h-16z M904 653h32v19h-32z M1006 884h32v19h-32z M1040 695h32v19h-32z M1040 716h32v9h-32z M1040 842h32v19h-32z M1074 653h32v19h-32z M1244 611h32v19h-32z" fill="#d2ecba"/>
<path d="M258 905h32v19h-32z M394 590h32v14h-32z M428 569h32v12h-32z M479 905h15v19h-15z M462 926h32v19h-32z M496 800h32v14h-32z M530 611h32v19h-32z M613 947h17v19h-17z M1074 947h32v19h-32z M1108 989h32v19h-32z" fill="#ebdde8"/>
<path d="M326 695h32v19h-32z M326 947h32v14h-32z M394 926h32v19h-32z M496 926h17v11h-17z M530 716h32v14h-32z M700 506h32v19h-32z M853 569h15v19h-15z" fill="#f3dedd"/>
<path d="M257 505v63 M257 568v126 M257 694v84 M257 904v126 M291 505v84 M291 589v84 M291 673v126 M291 799v126 M291 925v84 M325 505v168 M325 673v63 M325 736v168 M325 904v84 M325 988v63 M359 505v63 M359 652v168 M359 820v84 M359 904v126 M393 505v168 M393 673v84 M393 757v63 M393 820v84 M393 904v63 M427 505v168 M427 904v63 M427 967v84 M461 505v168 M461 673v84 M461 841v84 M495 631v63 M495 694v168 M495 862v84 M529 505v126 M529 631v168 M529 799v63 M529 862v126 M529 988v63 M563 505v168 M563 757v63 M563 820v84 M563 988v84 M597 631v84 M597 946v63 M631 505v126 M631 631v84 M631 715v126 M631 841v84 M631 925v84 M665 505v84 M665 589v84 M665 673v168 M665 841v63 M665 904v126 M699 505v84 M699 589v63 M699 652v168 M699 820v63 M699 883v84 M699 967v126 M733 841v63 M767 568v126 M767 694v63 M767 757v126 M767 883v168 M801 505v126 M801 631v168 M801 799v168 M801 967v84 M835 505v84 M835 589v84 M835 673v84 M835 820v168 M835 988v84 M869 505v84 M869 589v84 M869 841v63 M869 904v126 M903 505v168 M903 841v168 M937 505v126 M937 631v126 M937 757v126 M937 883v63 M971 505v63 M971 652v126 M971 778v168 M971 946v63 M1005 568v168 M1005 736v63 M1005 799v84 M1005 883v63 M1005 946v84 M1039 505v126 M1039 631v63 M1039 694v84 M1039 778v168 M1039 946v168 M1073 505v63 M1073 568v63 M1073 631v168 M1073 799v126 M1073 925v63 M1073 988v84 M1107 589v84 M1107 673v168 M1107 988v168 M1141 505v63 M1141 568v63 M1141 631v126 M1141 757v126 M1175 505v63 M1175 652v126 M1175 778v168 M1175 946v63 M1209 505v84 M1209 589v168 M1209 757v63 M1209 988v168 M1243 505v63 M1243 694v126 M1243 820v63 M1243 883v126 M1277 505v63 M1277 568v63 M1277 631v126 M1277 757v84 M1277 841v126 M1277 967v84 M359 505h238 M597 505h170 M767 505h68 M1005 505h102 M1107 505h102 M1209 505h170 M257 526h170 M665 526h68 M733 526h102 M1073 526h238 M257 547h170 M427 547h102 M529 547h170 M869 547h102 M971 547h68 M1039 547h68 M1107 547h170 M257 568h68 M325 568h238 M563 568h68 M631 568h102 M733 568h170 M903 568h102 M1175 568h68 M1243 568h238 M257 589h102 M359 589h68 M427 589h68 M495 589h102 M767 589h68 M835 589h238 M1073 589h170 M1243 589h170 M257 610h238 M495 610h68 M563 610h238 M801 610h170 M1141 610h238 M257 631h102 M359 631h170 M733 631h68 M801 631h170 M971 631h238 M1209 631h170 M257 652h238 M495 652h238 M733 652h170 M903 652h170 M1073 652h68 M1141 652h102 M1243 652h170 M359 673h238 M597 673h238 M835 673h170 M1005 673h68 M1073 673h170 M257 694h102 M359 694h170 M529 694h238 M937 694h102 M1039 694h102 M1141 694h68 M1209 694h68 M257 715h68 M325 715h68 M393 715h170 M869 715h68 M937 715h102 M1209 715h102 M257 736h238 M495 736h102 M597 736h68 M665 736h68 M1209 736h68 M257 757h170 M427 757h102 M529 757h102 M699 757h68 M767 757h238 M1005 757h68 M1073 757h238 M257 778h68 M325 778h102 M427 778h68 M495 778h102 M597 778h238 M1243 778h68 M257 799h238 M495 799h102 M835 799h238 M1073 799h102 M1175 799h102 M257 820h102 M359 820h170 M529 820h170 M699 820h238 M1243 820h170 M257 841h238 M495 841h170 M665 841h238 M903 841h68 M971 841h102 M1073 841h102 M1175 841h170 M257 862h102 M597 862h102 M699 862h170 M869 862h238 M1107 862h102 M1209 862h238 M461 883h170 M631 883h238 M869 883h170 M1039 883h238 M257 904h102 M359 904h68 M427 904h68 M495 904h170 M665 904h238 M903 904h102 M1005 904h238 M1243 904h102 M257 925h102 M359 925h68 M597 925h170 M767 925h170 M937 925h170 M1107 925h238 M495 946h238 M835 946h102 M1107 946h68 M1175 946h238 M257 967h238 M495 967h68 M563 967h68 M631 967h102 M733 967h68 M801 967h102 M903 967h170 M1073 967h68 M1141 967h102 M1243 967h102 M903 988h68 M971 988h170 M1141 988h170 M257 1009h68 M563 1009h102 M665 1009h68 M733 1009h238 M971 1009h170 M1141 1009h238" stroke="#fbfaf8" stroke-width="1.3" fill="none"/>
<path d="M510 841q5 47 0 94t0 94 M1005 657q102 -3 204 0t204 0 M1126 862q-3 26 0 52t0 52 M325 765q60 2 119 0t119 0 M971 979q94 -3 187 0t187 0 M393 874q76 2 153 0t153 0 M869 994q60 -2 119 0t119 0 M883 610q2 42 0 84t0 84 M790 757q-4 47 0 94t0 94 M304 631q-5 16 0 32t0 32 M563 657q94 6 187 0t187 0 M631 830q68 -4 136 0t136 0 M767 536q42 3 85 0t85 0 M937 911q94 5 187 0t187 0 M631 891q42 2 85 0t85 0 M1092 673q-3 42 0 84t0 84 M665 530q51 -2 102 0t102 0 M971 956q51 -5 102 0t102 0 M618 715q-4 32 0 63t0 63 M642 589q5 37 0 74t0 74 M574 526q1 16 0 32t0 32 M1201 757q5 16 0 32t0 32 M563 854q42 -4 85 0t85 0 M665 619q42 6 85 0t85 0 M811 736q-6 16 0 32t0 32 M1197 778q-3 21 0 42t0 42 M855 715q-1 16 0 32t0 32 M1185 610q-2 32 0 63t0 63 M869 916q60 -0 119 0t119 0 M850 862q4 42 0 84t0 84 M955 526q2 42 0 84t0 84 M614 778q-0 26 0 52t0 52 M620 841q-6 42 0 84t0 84 M1005 980q42 -4 85 0t85 0 M887 778q0 26 0 52t0 52 M710 652q6 21 0 42t0 42 M529 596q42 -4 85 0t85 0 M1055 862q-3 32 0 63t0 63 M414 883q-5 37 0 74t0 74 M393 582q102 1 204 0t204 0 M1132 841q-0 16 0 32t0 32 M878 631q-0 37 0 74t0 74 M291 770q85 -3 170 0t170 0 M461 538q94 -2 187 0t187 0 M733 994q76 1 153 0t153 0 M869 763q51 3 102 0t102 0 M971 596q119 4 238 0t238 0 M1005 846q94 -4 187 0t187 0 M1005 891q60 -5 119 0t119 0 M869 974q76 2 153 0t153 0 M1005 540q110 -4 221 0t221 0 M733 536q85 -3 170 0t170 0 M903 898q68 1 136 0t136 0 M835 704q110 -5 221 0t221 0 M937 752q119 -0 238 0t238 0 M699 561q60 -3 119 0t119 0 M903 958q110 5 221 0t221 0 M903 1002q76 4 153 0t153 0 M869 935q94 0 187 0t187 0 M1005 730q51 -3 102 0t102 0" stroke="#aad3e0" stroke-width="1.8" fill="none"/>
</g>
<path d="M422.4 572.2 L479.7 570.8 L485.4 592.3 L445.3 603.8 L422.4 602.3Z" fill="#e3e2e1"/>
<path d="M419.5 570.8 L435.3 570.8 L439.0 593.7 L419.5 599.5Z" fill="#c9ecc8"/>
<path d="M419.5 570.8 L425.3 570.8 L423.8 588.0 L419.5 589.4Z" fill="#b5d6e2"/>
<path d="M443.9 606.6 L488.3 602.3 L494.0 629.5 L459.6 648.2 L451.0 648.2Z" fill="#f2dad9"/>
<path d="M508.3 570.8 L554.2 570.8 L557.0 606.6 L525.5 618.1 L514.1 600.9Z" fill="#cfecb2"/>
<path d="M554.2 570.8 L600.0 570.8 L600.0 583.7 L562.8 600.9 L557.0 606.6Z" fill="#cdebb0"/>
<path d="M562.8 603.8 L600.0 588.0 L651.6 578.0 L648.7 629.5 L600.0 638.1 L562.8 649.6Z" fill="#efe5ed"/>
<path d="M468.2 704.0 L496.9 701.1 L499.7 721.2 L471.1 724.1Z" fill="#efe5ed"/>
<path d="M591.4 658.2 L640.1 649.6 L643.0 678.2 L594.3 684.0Z" fill="#e3e2e1"/>
<path d="M433.3 671.9 L451.0 671.9 L451.0 684.0 L433.3 684.0Z" fill="#c7c7b9"/>
<path d="M356.5 709.7 L373.7 706.9 L378.0 729.8 L359.4 732.7Z" fill="#cdebb0"/>
<path d="M336.5 692.6 L365.1 689.7 L368.0 704.0 L339.3 709.7Z" fill="#f8f8c8"/>
<path d="M445.3 658.2 L459.6 651.0 L491.1 649.6 L494.0 658.2 L474.0 662.5Z" fill="#aaaaaa"/>
<path d="M462.5 666.8 L496.9 661.0 L508.3 669.6 L468.2 672.5Z" fill="#bfe0b0"/>
<path d="M680.2 620.9 L706.0 623.8 L697.4 649.6 L677.3 643.9Z" fill="#e3e2e1"/>
<path d="M519.8 695.4 L531.2 718.3 L537.0 745.0 L525.5 745.0 L522.7 718.3Z" fill="#cdebb0"/>
<path d="M382.3 695.4 L416.7 691.1 L422.4 729.8 L393.8 732.7Z" fill="#e0dfdf"/>
<path d="M433.9 695.4 L468.2 686.8 L496.9 689.7 L502.6 712.6 L439.6 721.2Z" fill="#e0dfdf"/>
<path d="M765.0 572.2 L802.2 572.2 L802.2 606.6 L765.0 609.5Z" fill="#e0dfdf"/>
<path d="M888.2 618.1 L925.4 603.8 L948.3 620.9 L962.7 649.6 L936.9 669.6 L899.6 672.5Z" fill="#e3e2e1"/>
<path d="M819.4 643.9 L859.5 629.5 L873.9 661.0 L862.4 684.0 L830.9 689.7Z" fill="#e3e2e1"/>
<path d="M962.7 586.6 L1008.5 592.3 L1008.5 615.2 L965.5 612.3Z" fill="#efe5ed"/>
<path d="M999.9 620.9 L1062.9 609.5 L1074.4 643.9 L1005.6 655.3Z" fill="#efe5ed"/>
<path d="M813.7 606.6 L825.2 629.5 L830.9 666.8 L839.5 706.9 L826.6 729.8 L819.4 706.9 L816.6 649.6Z" fill="#cdf0c8"/>
<path d="M931.1 684.0 L965.5 678.2 L971.2 706.9 L936.9 718.3Z" fill="#e3e2e1"/>
<path d="M982.7 695.4 L1011.4 689.7 L1017.1 735.5 L988.4 745.0Z" fill="#e3e2e1"/>
<path d="M765.0 661.0 L799.4 655.3 L808.0 695.4 L770.7 706.9Z" fill="#e3e2e1"/>
<path d="M1111.6 672.5 L1125.9 669.6 L1128.8 681.1 L1113.0 684.0Z" fill="#f5f5c0"/>
<path d="M1148.9 669.6 L1163.2 666.8 L1166.0 678.2 L1150.3 681.1Z" fill="#f5f5c0"/>
<path d="M333.6 791.3 L365.1 788.4 L373.7 825.7 L342.2 831.4Z" fill="#e3e2e1"/>
<path d="M376.6 742.6 L399.5 739.7 L410.9 771.2 L382.3 779.8Z" fill="#e3e2e1"/>
<path d="M419.5 788.4 L448.2 782.7 L459.6 819.9 L433.9 828.5Z" fill="#e3e2e1"/>
<path d="M439.6 831.4 L453.9 828.5 L458.2 842.9 L442.4 844.3Z" fill="#efe5ed"/>
<path d="M481.1 828.5 L496.9 825.7 L499.7 854.3 L482.6 857.2Z" fill="#add19e"/>
<path d="M499.7 834.3 L522.7 825.7 L531.2 842.9 L508.3 848.6Z" fill="#f5f7c6"/>
<path d="M525.5 768.4 L551.3 774.1 L554.2 808.5 L542.7 819.9 L531.2 797.0Z" fill="#cdf0c8"/>
<path d="M568.5 788.4 L611.5 785.6 L617.2 805.6 L582.8 814.2Z" fill="#f5f7c6"/>
<path d="M568.5 840.0 L582.8 842.9 L622.9 874.4 L614.3 900.1 L577.1 888.7Z" fill="#e3d3e3"/>
<path d="M577.1 857.2 L591.4 860.0 L618.6 877.2 L608.6 894.4 L582.8 883.0Z" fill="#9d9d9d"/>
<path d="M628.6 883.0 L645.8 877.2 L683.1 894.4 L654.4 905.9Z" fill="#cdebb0"/>
<path d="M617.2 946.0 L640.1 938.0 L660.2 932.8 L765.0 920.2 L765.0 946.0Z" fill="#c8e6b4"/>
<path d="M468.2 900.1 L502.6 894.4 L511.2 934.5 L474.0 940.2Z" fill="#e3e2e1"/>
<path d="M726.0 774.1 L765.0 771.2 L765.0 791.3 L728.9 791.3Z" fill="#e3e2e1"/>
<path d="M577.1 819.9 L620.1 808.5 L663.0 792.7 L665.9 801.3 L622.9 819.9 L579.9 828.5Z" fill="#cdebb0"/>
<path d="M628.6 817.1 L663.0 805.6 L677.3 828.5 L640.1 840.0Z" fill="#e0dfdf"/>
<path d="M422.4 880.1 L474.0 868.6 L476.8 874.4 L425.3 885.8Z" fill="#cdebb0"/>
<path d="M925.4 877.2 L962.7 860.0 L1005.6 847.2 L1008.5 854.3 L965.5 871.5 L962.7 888.7 L936.9 894.4Z" fill="#c3deab"/>
<path d="M1017.1 831.4 L1062.9 814.2 L1068.6 825.7 L1022.8 842.9Z" fill="#c3deab"/>
<path d="M1105.9 802.8 L1146.0 791.3 L1177.5 828.5 L1166.0 848.6 L1123.1 837.1 L1111.6 817.1Z" fill="#c3deab"/>
<path d="M1166.0 777.0 L1205.0 762.6 L1205.0 774.1 L1171.8 788.4Z" fill="#c3deab"/>
<path d="M873.9 883.0 L914.0 877.2 L919.7 888.7 L879.6 894.4Z" fill="#c3deab"/>
<path d="M879.6 903.0 L908.2 898.7 L911.1 911.6 L882.4 914.5Z" fill="#c3deab"/>
<path d="M822.3 734.0 L832.3 736.9 L833.8 759.8 L825.2 762.6Z" fill="#c3deab"/>
<path d="M826.6 880.1 L839.5 894.4 L830.9 905.9Z" fill="#c3deab"/>
<path d="M785.1 854.3 L813.7 848.6 L816.6 860.0 L790.8 865.8Z" fill="#cdf0c8"/>
<path d="M902.5 931.7 L948.3 917.3 L962.7 944.0 L902.5 944.0Z" fill="#c3deab"/>
<path d="M765.0 914.5 L808.0 913.0 L813.7 934.5 L765.0 940.2Z" fill="#c3deab"/>
<path d="M1160.3 877.2 L1177.5 874.4 L1180.4 885.8 L1163.2 888.7Z" fill="#c3deab"/>
<path d="M994.2 734.0 L1017.1 734.0 L1019.9 751.2 L997.0 754.1Z" fill="#e3e2e1"/>
<path d="M1005.6 799.9 L1034.3 791.3 L1040.0 817.1 L1014.2 828.5Z" fill="#e3e2e1"/>
<path d="M1068.6 788.4 L1091.6 782.7 L1097.3 799.9 L1074.4 805.6Z" fill="#e3e2e1"/>
<path d="M770.7 745.5 L787.9 742.6 L793.6 777.0 L776.5 782.7Z" fill="#e3e2e1"/>
<path d="M1074.4 903.0 L1100.2 903.0 L1100.2 920.2 L1077.2 923.1Z" fill="#f2dad9"/>
<path d="M1065.8 851.4 L1080.1 850.0 L1080.1 857.2 L1065.8 858.6Z" fill="#f5f5c0"/>
<path d="M962.7 595.2 C967.9 597.1 984.1 602.3 994.2 606.6 C1004.2 610.9 1010.9 614.7 1022.8 620.9 C1034.7 627.1 1053.8 635.7 1065.8 643.9 C1077.7 652.0 1089.7 665.3 1094.4 669.6 M1062.9 615.2 C1065.8 620.9 1073.4 638.1 1080.1 649.6 C1086.8 661.0 1095.4 672.5 1103.0 684.0 C1110.7 695.4 1122.1 712.6 1125.9 718.3 M1120.2 592.3 C1127.8 589.9 1151.9 582.7 1166.0 578.0 C1180.2 573.2 1198.5 566.0 1205.0 563.6 M1080.1 649.6 C1089.7 646.7 1116.6 637.2 1137.4 632.4 C1158.2 627.6 1193.7 622.8 1205.0 620.9 M830.9 655.3 C835.7 659.1 850.0 669.6 859.5 678.2 C869.1 686.8 883.4 702.1 888.2 706.9 M765.0 718.3 C774.5 716.4 806.5 710.2 822.3 706.9 C838.0 703.5 853.3 699.7 859.5 698.3 M893.9 655.3 C901.1 652.4 922.1 642.4 936.9 638.1 C951.7 633.8 975.1 631.0 982.7 629.5 M919.7 706.9 C927.3 705.0 951.7 699.2 965.5 695.4 C979.4 691.6 996.6 685.9 1002.8 684.0 M1022.8 666.8 C1027.6 669.6 1041.9 677.3 1051.5 684.0 C1061.0 690.6 1070.6 699.2 1080.1 706.9 C1089.7 714.5 1104.0 726.0 1108.8 729.8 M330.7 718.3 C339.3 716.4 364.1 711.4 382.3 706.9 C400.4 702.3 422.4 694.9 439.6 691.1 C456.8 687.3 477.8 685.2 485.4 684.0 M508.3 629.5 C509.0 633.8 510.2 646.2 512.6 655.3 C515.0 664.4 521.0 679.2 522.7 684.0 M542.7 706.9 C549.4 708.8 573.7 713.6 582.8 718.3 C591.9 723.1 594.7 732.7 597.1 735.5 M625.8 695.4 C632.9 696.4 654.9 698.3 668.8 701.1 C682.6 704.0 702.2 710.7 708.9 712.6 M628.6 669.6 C632.9 672.0 646.3 683.5 654.4 684.0 C662.5 684.4 673.5 674.4 677.3 672.5 M330.7 819.9 C339.3 817.6 364.1 810.4 382.3 805.6 C400.4 800.8 420.5 796.1 439.6 791.3 C458.7 786.5 479.7 780.8 496.9 777.0 C514.1 773.1 535.1 769.8 542.7 768.4 M439.6 762.6 C449.1 761.2 482.6 754.5 496.9 754.1 C511.2 753.6 520.7 758.8 525.5 759.8 M554.2 814.2 C555.6 810.4 553.2 798.9 562.8 791.3 C572.3 783.7 593.8 774.1 611.5 768.4 C629.1 762.6 649.7 761.2 668.8 756.9 C687.8 752.6 716.5 745.0 726.0 742.6 M491.1 811.3 C492.1 817.6 494.0 836.6 496.9 848.6 C499.7 860.5 505.0 871.5 508.3 883.0 C511.7 894.4 515.5 911.6 516.9 917.3 M622.9 819.9 C624.3 825.7 632.0 843.8 631.5 854.3 C631.0 864.8 628.2 875.3 620.1 883.0 C611.9 890.6 589.0 897.3 582.8 900.1 M668.8 848.6 C675.9 846.2 695.7 839.0 711.7 834.3 C727.8 829.5 756.1 822.3 765.0 819.9 M640.1 868.6 C649.7 867.2 676.6 864.3 697.4 860.0 C718.2 855.7 753.7 845.7 765.0 842.9 M765.0 791.3 C772.2 789.4 793.6 783.7 808.0 779.8 C822.3 776.0 835.7 772.2 850.9 768.4 C866.2 764.6 891.5 758.8 899.6 756.9 M830.9 854.3 C839.0 852.4 863.8 847.6 879.6 842.9 C895.3 838.1 908.2 832.4 925.4 825.7 C942.6 819.0 973.2 806.6 982.7 802.8 M782.2 888.7 C793.6 885.3 830.9 873.9 850.9 868.6 C871.0 863.4 886.3 862.0 902.5 857.2 C918.7 852.4 940.7 842.9 948.3 840.0 M859.5 925.9 C870.5 922.6 903.0 912.1 925.4 905.9 C947.9 899.7 973.2 894.9 994.2 888.7 C1015.2 882.5 1027.6 875.3 1051.5 868.6 C1075.3 862.0 1111.8 853.4 1137.4 848.6 C1163.0 843.8 1193.7 841.4 1205.0 840.0 M1022.8 871.5 C1032.4 869.1 1061.0 862.0 1080.1 857.2 C1099.2 852.4 1127.8 845.2 1137.4 842.9 M1123.1 734.0 C1126.9 743.5 1141.2 772.2 1146.0 791.3 C1150.8 810.4 1153.2 831.4 1151.7 848.6 C1150.3 865.8 1139.8 886.8 1137.4 894.4 M902.5 734.0 C906.3 734.5 917.8 736.9 925.4 736.9 C933.1 736.9 944.5 734.5 948.3 734.0 M965.5 917.3 C975.1 914.9 1003.7 908.7 1022.8 903.0 C1041.9 897.3 1070.6 886.3 1080.1 883.0 M1080.1 903.0 L1088.7 934.5" fill="none" stroke="#aad3e0" stroke-width="1.9" stroke-linecap="round" stroke-linejoin="round"/>
<path d="M765.0 938.8 C779.3 937.6 822.3 936.2 850.9 931.7 C879.6 927.1 910.6 919.2 936.9 911.6 C963.1 904.0 989.4 893.9 1008.5 885.8 C1027.6 877.7 1034.7 870.5 1051.5 862.9 C1068.2 855.3 1083.2 852.9 1108.8 840.0 C1134.3 827.1 1189.0 794.6 1205.0 785.6 M765.0 613.8 C772.2 613.3 792.2 613.8 808.0 610.9 C823.7 608.0 844.3 599.9 859.5 596.6 C874.8 593.2 886.7 589.9 899.6 590.9 C912.5 591.8 926.8 598.0 936.9 602.3 C946.9 606.6 956.0 614.3 959.8 616.6" fill="none" stroke="#9a9a9a" stroke-width="0.9" stroke-linecap="round" stroke-linejoin="round" stroke-dasharray="3 2"/>
<path d="M531.2 635.3 C535.1 634.5 540.8 633.8 554.2 631.0 C567.5 628.1 597.1 621.4 611.5 618.1 C625.8 614.7 628.2 614.5 640.1 610.9 C652.0 607.3 675.9 599.0 683.1 596.6 M534.1 635.3 C535.5 642.4 539.4 667.2 542.7 678.2 C546.1 689.2 552.3 697.3 554.2 701.1 M559.9 629.5 C560.9 636.7 563.7 659.6 565.6 672.5 C567.5 685.4 569.4 694.8 571.4 706.9 C573.3 719.0 576.1 738.6 577.1 745.0 M640.1 610.9 C641.5 617.4 644.9 637.4 648.7 649.6 C652.5 661.8 659.7 672.5 663.0 684.0 C666.4 695.4 667.8 712.6 668.8 718.3 M683.1 596.6 C685.5 600.6 693.1 612.1 697.4 620.9 C701.7 629.8 709.8 641.5 708.9 649.6 C707.9 657.7 699.3 664.9 691.7 669.6 C684.0 674.4 667.8 676.8 663.0 678.2 M330.7 706.9 C336.9 705.4 353.2 701.1 368.0 698.3 C382.8 695.4 402.8 692.6 419.5 689.7 C436.2 686.8 460.1 682.5 468.2 681.1 M439.6 691.1 C440.5 695.7 443.4 709.4 445.3 718.3 C447.2 727.3 450.1 740.5 451.0 745.0 M668.8 570.8 C671.6 575.1 669.9 593.0 685.9 596.6 C702.0 600.2 751.8 593.0 765.0 592.3 M622.9 706.9 C632.9 705.4 663.5 701.1 683.1 698.3 C702.6 695.4 730.8 691.1 740.4 689.7 M765.0 606.6 C767.9 606.6 779.3 600.4 782.2 606.6 C785.1 612.8 785.1 637.6 782.2 643.9 C779.3 650.1 767.9 643.9 765.0 643.9 M873.9 600.9 C878.2 605.7 893.0 620.0 899.6 629.5 C906.3 639.1 907.8 652.9 914.0 658.2 C920.2 663.4 928.8 662.5 936.9 661.0 C945.0 659.6 958.4 651.5 962.7 649.6 M908.2 595.2 C910.1 600.9 914.9 618.6 919.7 629.5 C924.5 640.5 934.0 655.8 936.9 661.0 M876.7 649.6 C882.9 647.2 901.5 638.6 914.0 635.3 C926.4 631.9 945.0 630.5 951.2 629.5 M977.0 586.6 C977.9 592.3 980.3 606.6 982.7 620.9 C985.1 635.3 989.9 663.9 991.3 672.5 M982.7 689.7 C984.6 694.9 991.3 712.0 994.2 721.2 C997.0 730.4 998.9 741.0 999.9 745.0 M1068.6 669.6 C1070.6 675.8 1076.8 694.3 1080.1 706.9 C1083.4 719.4 1087.3 738.6 1088.7 745.0 M1160.3 649.6 C1162.2 655.3 1167.0 672.0 1171.8 684.0 C1176.5 695.9 1186.1 715.0 1189.0 721.2 M1103.0 695.4 C1110.2 693.5 1134.5 686.8 1146.0 684.0 C1157.4 681.1 1167.5 679.2 1171.8 678.2 M925.4 672.5 C932.1 671.1 951.7 666.3 965.5 663.9 C979.4 661.5 1001.3 659.1 1008.5 658.2 M370.8 751.2 C372.7 757.9 378.0 778.4 382.3 791.3 C386.6 804.2 394.2 822.3 396.6 828.5 M330.7 768.4 C339.3 766.9 365.1 762.6 382.3 759.8 C399.5 756.9 425.3 752.6 433.9 751.2 M368.0 828.5 C375.1 826.6 396.6 820.9 410.9 817.1 C425.3 813.3 439.6 809.9 453.9 805.6 C468.2 801.3 484.9 794.6 496.9 791.3 C508.8 787.9 520.7 786.5 525.5 785.6 M439.6 840.0 C447.2 836.6 471.1 825.7 485.4 819.9 C499.7 814.2 518.8 808.0 525.5 805.6 M554.2 774.1 C563.7 774.6 592.4 777.4 611.5 777.0 C630.6 776.5 654.4 773.6 668.8 771.2 C683.1 768.9 692.6 764.1 697.4 762.6 M582.8 828.5 C585.7 833.8 590.5 851.4 600.0 860.0 C609.5 868.6 633.4 876.8 640.1 880.1 M668.8 734.0 C669.5 741.2 673.0 766.5 673.0 777.0 C673.0 787.5 669.5 793.7 668.8 797.0 M726.0 805.6 L765.0 791.3 M743.2 762.6 C745.1 772.2 751.1 807.5 754.7 819.9 C758.3 832.4 763.3 834.3 765.0 837.1 M485.4 894.4 C486.8 898.7 491.6 911.9 494.0 920.2 C496.4 928.5 498.8 940.0 499.7 944.0 M776.5 742.6 C779.3 748.3 788.4 764.1 793.6 777.0 C798.9 789.9 805.6 812.8 808.0 819.9 M793.6 791.3 C800.8 788.4 822.3 778.9 836.6 774.1 C850.9 769.3 866.7 764.6 879.6 762.6 C892.5 760.7 908.2 762.6 914.0 762.6 M868.1 742.6 C869.1 747.8 871.9 763.6 873.9 774.1 C875.8 784.6 878.6 800.4 879.6 805.6 M830.9 805.6 L836.6 834.3 M965.5 762.6 C968.4 769.8 976.5 796.5 982.7 805.6 C988.9 814.7 999.4 815.2 1002.8 817.1 M1002.8 762.6 C1010.9 766.5 1031.4 785.1 1051.5 785.6 C1071.5 786.0 1111.1 768.9 1123.1 765.5 M1042.9 751.2 C1044.3 756.9 1049.1 775.5 1051.5 785.6 C1053.8 795.6 1056.2 807.0 1057.2 811.3 M1108.8 748.3 L1117.3 788.4 M1022.8 883.0 C1030.0 879.6 1049.1 868.6 1065.8 862.9 C1082.5 857.2 1099.9 854.3 1123.1 848.6 C1146.3 842.9 1191.3 831.9 1205.0 828.5 M1100.2 831.4 C1103.0 839.0 1112.1 862.9 1117.3 877.2 C1122.6 891.6 1129.3 910.6 1131.7 917.3 M1074.4 903.0 L1108.8 894.4 M962.7 894.4 L1022.8 877.2 M765.0 928.8 C774.5 929.3 799.4 932.6 822.3 931.7 C845.2 930.7 878.6 927.4 902.5 923.1 C926.4 918.8 955.0 908.7 965.5 905.9" fill="none" stroke="#cfcdc8" stroke-width="2.7" stroke-linecap="round" stroke-linejoin="round"/>
<path d="M531.2 635.3 C535.1 634.5 540.8 633.8 554.2 631.0 C567.5 628.1 597.1 621.4 611.5 618.1 C625.8 614.7 628.2 614.5 640.1 610.9 C652.0 607.3 675.9 599.0 683.1 596.6 M534.1 635.3 C535.5 642.4 539.4 667.2 542.7 678.2 C546.1 689.2 552.3 697.3 554.2 701.1 M559.9 629.5 C560.9 636.7 563.7 659.6 565.6 672.5 C567.5 685.4 569.4 694.8 571.4 706.9 C573.3 719.0 576.1 738.6 577.1 745.0 M640.1 610.9 C641.5 617.4 644.9 637.4 648.7 649.6 C652.5 661.8 659.7 672.5 663.0 684.0 C666.4 695.4 667.8 712.6 668.8 718.3 M683.1 596.6 C685.5 600.6 693.1 612.1 697.4 620.9 C701.7 629.8 709.8 641.5 708.9 649.6 C707.9 657.7 699.3 664.9 691.7 669.6 C684.0 674.4 667.8 676.8 663.0 678.2 M330.7 706.9 C336.9 705.4 353.2 701.1 368.0 698.3 C382.8 695.4 402.8 692.6 419.5 689.7 C436.2 686.8 460.1 682.5 468.2 681.1 M439.6 691.1 C440.5 695.7 443.4 709.4 445.3 718.3 C447.2 727.3 450.1 740.5 451.0 745.0 M668.8 570.8 C671.6 575.1 669.9 593.0 685.9 596.6 C702.0 600.2 751.8 593.0 765.0 592.3 M622.9 706.9 C632.9 705.4 663.5 701.1 683.1 698.3 C702.6 695.4 730.8 691.1 740.4 689.7 M765.0 606.6 C767.9 606.6 779.3 600.4 782.2 606.6 C785.1 612.8 785.1 637.6 782.2 643.9 C779.3 650.1 767.9 643.9 765.0 643.9 M873.9 600.9 C878.2 605.7 893.0 620.0 899.6 629.5 C906.3 639.1 907.8 652.9 914.0 658.2 C920.2 663.4 928.8 662.5 936.9 661.0 C945.0 659.6 958.4 651.5 962.7 649.6 M908.2 595.2 C910.1 600.9 914.9 618.6 919.7 629.5 C924.5 640.5 934.0 655.8 936.9 661.0 M876.7 649.6 C882.9 647.2 901.5 638.6 914.0 635.3 C926.4 631.9 945.0 630.5 951.2 629.5 M977.0 586.6 C977.9 592.3 980.3 606.6 982.7 620.9 C985.1 635.3 989.9 663.9 991.3 672.5 M982.7 689.7 C984.6 694.9 991.3 712.0 994.2 721.2 C997.0 730.4 998.9 741.0 999.9 745.0 M1068.6 669.6 C1070.6 675.8 1076.8 694.3 1080.1 706.9 C1083.4 719.4 1087.3 738.6 1088.7 745.0 M1160.3 649.6 C1162.2 655.3 1167.0 672.0 1171.8 684.0 C1176.5 695.9 1186.1 715.0 1189.0 721.2 M1103.0 695.4 C1110.2 693.5 1134.5 686.8 1146.0 684.0 C1157.4 681.1 1167.5 679.2 1171.8 678.2 M925.4 672.5 C932.1 671.1 951.7 666.3 965.5 663.9 C979.4 661.5 1001.3 659.1 1008.5 658.2 M370.8 751.2 C372.7 757.9 378.0 778.4 382.3 791.3 C386.6 804.2 394.2 822.3 396.6 828.5 M330.7 768.4 C339.3 766.9 365.1 762.6 382.3 759.8 C399.5 756.9 425.3 752.6 433.9 751.2 M368.0 828.5 C375.1 826.6 396.6 820.9 410.9 817.1 C425.3 813.3 439.6 809.9 453.9 805.6 C468.2 801.3 484.9 794.6 496.9 791.3 C508.8 787.9 520.7 786.5 525.5 785.6 M439.6 840.0 C447.2 836.6 471.1 825.7 485.4 819.9 C499.7 814.2 518.8 808.0 525.5 805.6 M554.2 774.1 C563.7 774.6 592.4 777.4 611.5 777.0 C630.6 776.5 654.4 773.6 668.8 771.2 C683.1 768.9 692.6 764.1 697.4 762.6 M582.8 828.5 C585.7 833.8 590.5 851.4 600.0 860.0 C609.5 868.6 633.4 876.8 640.1 880.1 M668.8 734.0 C669.5 741.2 673.0 766.5 673.0 777.0 C673.0 787.5 669.5 793.7 668.8 797.0 M726.0 805.6 L765.0 791.3 M743.2 762.6 C745.1 772.2 751.1 807.5 754.7 819.9 C758.3 832.4 763.3 834.3 765.0 837.1 M485.4 894.4 C486.8 898.7 491.6 911.9 494.0 920.2 C496.4 928.5 498.8 940.0 499.7 944.0 M776.5 742.6 C779.3 748.3 788.4 764.1 793.6 777.0 C798.9 789.9 805.6 812.8 808.0 819.9 M793.6 791.3 C800.8 788.4 822.3 778.9 836.6 774.1 C850.9 769.3 866.7 764.6 879.6 762.6 C892.5 760.7 908.2 762.6 914.0 762.6 M868.1 742.6 C869.1 747.8 871.9 763.6 873.9 774.1 C875.8 784.6 878.6 800.4 879.6 805.6 M830.9 805.6 L836.6 834.3 M965.5 762.6 C968.4 769.8 976.5 796.5 982.7 805.6 C988.9 814.7 999.4 815.2 1002.8 817.1 M1002.8 762.6 C1010.9 766.5 1031.4 785.1 1051.5 785.6 C1071.5 786.0 1111.1 768.9 1123.1 765.5 M1042.9 751.2 C1044.3 756.9 1049.1 775.5 1051.5 785.6 C1053.8 795.6 1056.2 807.0 1057.2 811.3 M1108.8 748.3 L1117.3 788.4 M1022.8 883.0 C1030.0 879.6 1049.1 868.6 1065.8 862.9 C1082.5 857.2 1099.9 854.3 1123.1 848.6 C1146.3 842.9 1191.3 831.9 1205.0 828.5 M1100.2 831.4 C1103.0 839.0 1112.1 862.9 1117.3 877.2 C1122.6 891.6 1129.3 910.6 1131.7 917.3 M1074.4 903.0 L1108.8 894.4 M962.7 894.4 L1022.8 877.2 M765.0 928.8 C774.5 929.3 799.4 932.6 822.3 931.7 C845.2 930.7 878.6 927.4 902.5 923.1 C926.4 918.8 955.0 908.7 965.5 905.9" fill="none" stroke="#ffffff" stroke-width="1.8" stroke-linecap="round" stroke-linejoin="round"/>
<path d="M545.6 668.2 C551.8 667.0 567.1 664.1 582.8 661.0 C598.6 657.9 625.8 653.9 640.1 649.6 C654.4 645.3 660.6 640.3 668.8 635.3 C676.9 630.2 679.3 622.6 688.8 619.5 C698.4 616.4 713.3 617.4 726.0 616.6 C738.7 615.9 758.5 615.4 765.0 615.2 M435.3 570.8 C436.5 576.8 439.8 593.5 442.4 606.6 C445.1 619.7 449.6 642.4 451.0 649.6 M611.5 732.7 C621.0 730.3 649.7 722.6 668.8 718.3 C687.8 714.0 710.0 710.2 726.0 706.9 C742.1 703.5 758.5 699.7 765.0 698.3 M332.2 669.6 C333.8 675.8 339.6 694.3 342.2 706.9 C344.8 719.4 347.0 738.6 347.9 745.0 M419.5 672.5 C420.5 678.2 423.1 694.8 425.3 706.9 C427.4 719.0 431.5 740.5 432.4 745.0 C433.4 749.5 429.3 728.7 431.0 734.0 C432.7 739.3 438.2 762.6 442.4 777.0 C446.7 791.3 452.5 807.0 456.8 819.9 C461.1 832.8 465.4 846.7 468.2 854.3 C471.1 862.0 473.0 863.9 474.0 865.8 M422.4 605.2 C427.6 604.2 443.4 601.4 453.9 599.5 C464.4 597.5 480.2 594.7 485.4 593.7 M668.8 635.3 C673.5 639.6 687.8 651.0 697.4 661.0 C706.9 671.1 717.9 681.4 726.0 695.4 C734.2 709.4 742.8 736.7 746.1 745.0 M648.7 570.8 C649.7 574.4 651.1 581.5 654.4 592.3 C657.8 603.0 666.4 628.1 668.8 635.3 M754.7 570.8 L757.6 615.2 M802.2 644.4 C810.4 640.0 837.1 626.0 850.9 618.1 C864.8 610.1 872.9 601.7 885.3 596.6 C897.7 591.4 912.0 589.8 925.4 587.1 C938.8 584.5 951.2 582.8 965.5 580.8 C979.8 578.8 998.9 576.8 1011.4 575.1 C1023.8 573.4 1035.2 571.5 1040.0 570.8 M850.9 618.1 C854.8 623.3 867.6 638.6 873.9 649.6 C880.1 660.6 884.4 672.0 888.2 684.0 C892.0 695.9 894.4 711.0 896.8 721.2 C899.2 731.4 902.3 742.8 902.5 745.0 C902.7 747.1 897.2 730.1 898.2 734.0 C899.2 737.9 904.4 756.9 908.2 768.4 C912.0 779.8 916.8 790.3 921.1 802.8 C925.4 815.2 929.5 830.4 934.0 842.9 C938.5 855.3 944.0 865.8 948.3 877.2 C952.6 888.7 956.0 900.5 959.8 911.6 C963.6 922.7 969.3 938.6 971.2 944.0 M1009.9 570.8 C1011.1 577.3 1013.0 595.4 1017.1 609.5 C1021.1 623.6 1029.5 641.0 1034.3 655.3 C1039.0 669.6 1042.4 680.5 1045.7 695.4 C1049.1 710.4 1053.1 738.5 1054.3 745.0 C1055.5 751.4 1051.9 729.6 1052.9 734.0 C1053.8 738.4 1057.4 758.3 1060.1 771.2 C1062.7 784.1 1065.3 797.5 1068.6 811.3 C1072.0 825.2 1075.8 840.5 1080.1 854.3 C1084.4 868.2 1089.7 881.5 1094.4 894.4 C1099.2 907.3 1105.4 923.4 1108.8 931.7 C1112.1 939.9 1113.5 941.9 1114.5 944.0 M1097.3 570.8 C1098.7 577.3 1101.1 595.4 1105.9 609.5 C1110.7 623.6 1118.8 639.1 1125.9 655.3 C1133.1 671.5 1142.6 691.9 1148.9 706.9 C1155.1 721.8 1161.7 740.5 1163.2 745.0 C1164.6 749.5 1155.5 729.6 1157.4 734.0 C1159.4 738.4 1168.9 758.8 1174.6 771.2 C1180.4 783.7 1186.8 797.5 1191.8 808.5 C1196.9 819.5 1202.8 832.4 1205.0 837.1 M1080.1 735.5 C1089.7 732.7 1116.6 724.1 1137.4 718.3 C1158.2 712.6 1193.7 704.0 1205.0 701.1 M1160.3 745.0 L1205.0 732.7 M902.5 629.5 C906.3 628.1 917.8 623.6 925.4 620.9 C933.1 618.3 939.3 615.2 948.3 613.8 C957.4 612.3 974.6 612.6 979.8 612.3 M765.0 695.4 L782.2 689.7 M773.6 669.6 C775.5 675.8 782.2 694.3 785.1 706.9 C787.9 719.4 789.8 738.6 790.8 745.0 M342.2 734.0 C343.6 741.2 347.0 762.6 350.8 777.0 C354.6 791.3 361.8 805.6 365.1 819.9 C368.4 834.3 369.9 855.7 370.8 862.9 M330.7 785.6 L410.9 781.3 M330.7 860.0 L368.0 858.6 M419.5 908.7 C427.6 907.1 453.0 901.8 468.2 898.7 C483.5 895.6 500.2 889.4 511.2 890.1 C522.2 890.8 527.0 899.4 534.1 903.0 C541.3 906.6 543.7 911.4 554.2 911.6 C564.7 911.8 582.8 906.8 597.1 904.4 C611.5 902.1 625.8 901.3 640.1 897.3 C654.4 893.2 668.8 885.8 683.1 880.1 C697.4 874.4 712.4 868.2 726.0 862.9 C739.7 857.7 758.5 851.0 765.0 848.6 M465.4 944.0 C470.6 942.9 477.3 939.4 496.9 937.4 C516.4 935.3 558.9 934.3 582.8 931.7 C606.7 929.0 621.0 925.2 640.1 921.6 C659.2 918.0 682.1 912.8 697.4 910.2 C712.7 907.5 726.0 906.6 731.8 905.9 M628.6 834.3 C630.6 840.0 637.2 857.7 640.1 868.6 C643.0 879.6 643.4 889.2 645.8 900.1 C648.2 911.1 652.0 927.2 654.4 934.5 C656.8 941.8 659.2 942.4 660.2 944.0 M525.5 749.8 C533.2 748.6 557.0 745.0 571.4 742.6 C585.7 740.2 604.8 736.6 611.5 735.4 M770.7 838.6 C776.0 836.2 790.8 829.2 802.2 824.2 C813.7 819.2 825.6 811.8 839.5 808.5 C853.3 805.1 871.5 805.9 885.3 804.2 C899.2 802.5 909.2 802.5 922.6 798.5 C935.9 794.4 951.2 786.3 965.5 779.8 C979.8 773.4 994.2 765.0 1008.5 759.8 C1022.8 754.5 1038.1 752.1 1051.5 748.3 C1064.8 744.5 1079.1 739.3 1088.7 736.9 C1098.2 734.5 1105.4 734.5 1108.8 734.0 M945.5 860.0 C951.7 857.7 972.2 850.5 982.7 845.7 C993.2 840.9 998.9 836.2 1008.5 831.4 C1018.0 826.6 1029.0 821.4 1040.0 817.1 C1051.0 812.8 1060.5 810.2 1074.4 805.6 C1088.2 801.1 1110.2 794.2 1123.1 789.9 C1136.0 785.6 1146.9 781.5 1151.7 779.8 M1019.9 734.0 C1021.4 741.2 1025.2 763.1 1028.5 777.0 C1031.9 790.8 1038.1 810.4 1040.0 817.1 M1083.0 734.0 L1094.4 791.3 M1103.0 765.5 C1108.8 763.6 1124.0 758.8 1137.4 754.1 C1150.8 749.3 1175.6 739.7 1183.2 736.9 M1080.1 944.0 C1084.9 941.9 1099.2 935.1 1108.8 931.7 C1118.3 928.2 1132.6 924.5 1137.4 923.1 M1166.0 940.2 L1205.0 934.5" fill="none" stroke="#b9bc66" stroke-width="3.9" stroke-linecap="round" stroke-linejoin="round"/>
<path d="M545.6 668.2 C551.8 667.0 567.1 664.1 582.8 661.0 C598.6 657.9 625.8 653.9 640.1 649.6 C654.4 645.3 660.6 640.3 668.8 635.3 C676.9 630.2 679.3 622.6 688.8 619.5 C698.4 616.4 713.3 617.4 726.0 616.6 C738.7 615.9 758.5 615.4 765.0 615.2 M435.3 570.8 C436.5 576.8 439.8 593.5 442.4 606.6 C445.1 619.7 449.6 642.4 451.0 649.6 M611.5 732.7 C621.0 730.3 649.7 722.6 668.8 718.3 C687.8 714.0 710.0 710.2 726.0 706.9 C742.1 703.5 758.5 699.7 765.0 698.3 M332.2 669.6 C333.8 675.8 339.6 694.3 342.2 706.9 C344.8 719.4 347.0 738.6 347.9 745.0 M419.5 672.5 C420.5 678.2 423.1 694.8 425.3 706.9 C427.4 719.0 431.5 740.5 432.4 745.0 C433.4 749.5 429.3 728.7 431.0 734.0 C432.7 739.3 438.2 762.6 442.4 777.0 C446.7 791.3 452.5 807.0 456.8 819.9 C461.1 832.8 465.4 846.7 468.2 854.3 C471.1 862.0 473.0 863.9 474.0 865.8 M422.4 605.2 C427.6 604.2 443.4 601.4 453.9 599.5 C464.4 597.5 480.2 594.7 485.4 593.7 M668.8 635.3 C673.5 639.6 687.8 651.0 697.4 661.0 C706.9 671.1 717.9 681.4 726.0 695.4 C734.2 709.4 742.8 736.7 746.1 745.0 M648.7 570.8 C649.7 574.4 651.1 581.5 654.4 592.3 C657.8 603.0 666.4 628.1 668.8 635.3 M754.7 570.8 L757.6 615.2 M802.2 644.4 C810.4 640.0 837.1 626.0 850.9 618.1 C864.8 610.1 872.9 601.7 885.3 596.6 C897.7 591.4 912.0 589.8 925.4 587.1 C938.8 584.5 951.2 582.8 965.5 580.8 C979.8 578.8 998.9 576.8 1011.4 575.1 C1023.8 573.4 1035.2 571.5 1040.0 570.8 M850.9 618.1 C854.8 623.3 867.6 638.6 873.9 649.6 C880.1 660.6 884.4 672.0 888.2 684.0 C892.0 695.9 894.4 711.0 896.8 721.2 C899.2 731.4 902.3 742.8 902.5 745.0 C902.7 747.1 897.2 730.1 898.2 734.0 C899.2 737.9 904.4 756.9 908.2 768.4 C912.0 779.8 916.8 790.3 921.1 802.8 C925.4 815.2 929.5 830.4 934.0 842.9 C938.5 855.3 944.0 865.8 948.3 877.2 C952.6 888.7 956.0 900.5 959.8 911.6 C963.6 922.7 969.3 938.6 971.2 944.0 M1009.9 570.8 C1011.1 577.3 1013.0 595.4 1017.1 609.5 C1021.1 623.6 1029.5 641.0 1034.3 655.3 C1039.0 669.6 1042.4 680.5 1045.7 695.4 C1049.1 710.4 1053.1 738.5 1054.3 745.0 C1055.5 751.4 1051.9 729.6 1052.9 734.0 C1053.8 738.4 1057.4 758.3 1060.1 771.2 C1062.7 784.1 1065.3 797.5 1068.6 811.3 C1072.0 825.2 1075.8 840.5 1080.1 854.3 C1084.4 868.2 1089.7 881.5 1094.4 894.4 C1099.2 907.3 1105.4 923.4 1108.8 931.7 C1112.1 939.9 1113.5 941.9 1114.5 944.0 M1097.3 570.8 C1098.7 577.3 1101.1 595.4 1105.9 609.5 C1110.7 623.6 1118.8 639.1 1125.9 655.3 C1133.1 671.5 1142.6 691.9 1148.9 706.9 C1155.1 721.8 1161.7 740.5 1163.2 745.0 C1164.6 749.5 1155.5 729.6 1157.4 734.0 C1159.4 738.4 1168.9 758.8 1174.6 771.2 C1180.4 783.7 1186.8 797.5 1191.8 808.5 C1196.9 819.5 1202.8 832.4 1205.0 837.1 M1080.1 735.5 C1089.7 732.7 1116.6 724.1 1137.4 718.3 C1158.2 712.6 1193.7 704.0 1205.0 701.1 M1160.3 745.0 L1205.0 732.7 M902.5 629.5 C906.3 628.1 917.8 623.6 925.4 620.9 C933.1 618.3 939.3 615.2 948.3 613.8 C957.4 612.3 974.6 612.6 979.8 612.3 M765.0 695.4 L782.2 689.7 M773.6 669.6 C775.5 675.8 782.2 694.3 785.1 706.9 C787.9 719.4 789.8 738.6 790.8 745.0 M342.2 734.0 C343.6 741.2 347.0 762.6 350.8 777.0 C354.6 791.3 361.8 805.6 365.1 819.9 C368.4 834.3 369.9 855.7 370.8 862.9 M330.7 785.6 L410.9 781.3 M330.7 860.0 L368.0 858.6 M419.5 908.7 C427.6 907.1 453.0 901.8 468.2 898.7 C483.5 895.6 500.2 889.4 511.2 890.1 C522.2 890.8 527.0 899.4 534.1 903.0 C541.3 906.6 543.7 911.4 554.2 911.6 C564.7 911.8 582.8 906.8 597.1 904.4 C611.5 902.1 625.8 901.3 640.1 897.3 C654.4 893.2 668.8 885.8 683.1 880.1 C697.4 874.4 712.4 868.2 726.0 862.9 C739.7 857.7 758.5 851.0 765.0 848.6 M465.4 944.0 C470.6 942.9 477.3 939.4 496.9 937.4 C516.4 935.3 558.9 934.3 582.8 931.7 C606.7 929.0 621.0 925.2 640.1 921.6 C659.2 918.0 682.1 912.8 697.4 910.2 C712.7 907.5 726.0 906.6 731.8 905.9 M628.6 834.3 C630.6 840.0 637.2 857.7 640.1 868.6 C643.0 879.6 643.4 889.2 645.8 900.1 C648.2 911.1 652.0 927.2 654.4 934.5 C656.8 941.8 659.2 942.4 660.2 944.0 M525.5 749.8 C533.2 748.6 557.0 745.0 571.4 742.6 C585.7 740.2 604.8 736.6 611.5 735.4 M770.7 838.6 C776.0 836.2 790.8 829.2 802.2 824.2 C813.7 819.2 825.6 811.8 839.5 808.5 C853.3 805.1 871.5 805.9 885.3 804.2 C899.2 802.5 909.2 802.5 922.6 798.5 C935.9 794.4 951.2 786.3 965.5 779.8 C979.8 773.4 994.2 765.0 1008.5 759.8 C1022.8 754.5 1038.1 752.1 1051.5 748.3 C1064.8 744.5 1079.1 739.3 1088.7 736.9 C1098.2 734.5 1105.4 734.5 1108.8 734.0 M945.5 860.0 C951.7 857.7 972.2 850.5 982.7 845.7 C993.2 840.9 998.9 836.2 1008.5 831.4 C1018.0 826.6 1029.0 821.4 1040.0 817.1 C1051.0 812.8 1060.5 810.2 1074.4 805.6 C1088.2 801.1 1110.2 794.2 1123.1 789.9 C1136.0 785.6 1146.9 781.5 1151.7 779.8 M1019.9 734.0 C1021.4 741.2 1025.2 763.1 1028.5 777.0 C1031.9 790.8 1038.1 810.4 1040.0 817.1 M1083.0 734.0 L1094.4 791.3 M1103.0 765.5 C1108.8 763.6 1124.0 758.8 1137.4 754.1 C1150.8 749.3 1175.6 739.7 1183.2 736.9 M1080.1 944.0 C1084.9 941.9 1099.2 935.1 1108.8 931.7 C1118.3 928.2 1132.6 924.5 1137.4 923.1 M1166.0 940.2 L1205.0 934.5" fill="none" stroke="#f3f5a8" stroke-width="2.9" stroke-linecap="round" stroke-linejoin="round"/>
<path d="M545.6 668.2 C551.8 667.0 567.1 664.1 582.8 661.0 C598.6 657.9 625.8 653.9 640.1 649.6 C654.4 645.3 660.6 640.3 668.8 635.3 C676.9 630.2 679.3 622.6 688.8 619.5 C698.4 616.4 713.3 617.4 726.0 616.6 C738.7 615.9 758.5 615.4 765.0 615.2 M435.3 570.8 C436.5 576.8 439.8 593.5 442.4 606.6 C445.1 619.7 449.6 642.4 451.0 649.6 M611.5 732.7 C621.0 730.3 649.7 722.6 668.8 718.3 C687.8 714.0 710.0 710.2 726.0 706.9 C742.1 703.5 758.5 699.7 765.0 698.3 M332.2 669.6 C333.8 675.8 339.6 694.3 342.2 706.9 C344.8 719.4 347.0 738.6 347.9 745.0 M419.5 672.5 C420.5 678.2 423.1 694.8 425.3 706.9 C427.4 719.0 431.5 740.5 432.4 745.0 C433.4 749.5 429.3 728.7 431.0 734.0 C432.7 739.3 438.2 762.6 442.4 777.0 C446.7 791.3 452.5 807.0 456.8 819.9 C461.1 832.8 465.4 846.7 468.2 854.3 C471.1 862.0 473.0 863.9 474.0 865.8 M422.4 605.2 C427.6 604.2 443.4 601.4 453.9 599.5 C464.4 597.5 480.2 594.7 485.4 593.7 M668.8 635.3 C673.5 639.6 687.8 651.0 697.4 661.0 C706.9 671.1 717.9 681.4 726.0 695.4 C734.2 709.4 742.8 736.7 746.1 745.0 M648.7 570.8 C649.7 574.4 651.1 581.5 654.4 592.3 C657.8 603.0 666.4 628.1 668.8 635.3 M754.7 570.8 L757.6 615.2 M802.2 644.4 C810.4 640.0 837.1 626.0 850.9 618.1 C864.8 610.1 872.9 601.7 885.3 596.6 C897.7 591.4 912.0 589.8 925.4 587.1 C938.8 584.5 951.2 582.8 965.5 580.8 C979.8 578.8 998.9 576.8 1011.4 575.1 C1023.8 573.4 1035.2 571.5 1040.0 570.8 M850.9 618.1 C854.8 623.3 867.6 638.6 873.9 649.6 C880.1 660.6 884.4 672.0 888.2 684.0 C892.0 695.9 894.4 711.0 896.8 721.2 C899.2 731.4 902.3 742.8 902.5 745.0 C902.7 747.1 897.2 730.1 898.2 734.0 C899.2 737.9 904.4 756.9 908.2 768.4 C912.0 779.8 916.8 790.3 921.1 802.8 C925.4 815.2 929.5 830.4 934.0 842.9 C938.5 855.3 944.0 865.8 948.3 877.2 C952.6 888.7 956.0 900.5 959.8 911.6 C963.6 922.7 969.3 938.6 971.2 944.0 M1009.9 570.8 C1011.1 577.3 1013.0 595.4 1017.1 609.5 C1021.1 623.6 1029.5 641.0 1034.3 655.3 C1039.0 669.6 1042.4 680.5 1045.7 695.4 C1049.1 710.4 1053.1 738.5 1054.3 745.0 C1055.5 751.4 1051.9 729.6 1052.9 734.0 C1053.8 738.4 1057.4 758.3 1060.1 771.2 C1062.7 784.1 1065.3 797.5 1068.6 811.3 C1072.0 825.2 1075.8 840.5 1080.1 854.3 C1084.4 868.2 1089.7 881.5 1094.4 894.4 C1099.2 907.3 1105.4 923.4 1108.8 931.7 C1112.1 939.9 1113.5 941.9 1114.5 944.0 M1097.3 570.8 C1098.7 577.3 1101.1 595.4 1105.9 609.5 C1110.7 623.6 1118.8 639.1 1125.9 655.3 C1133.1 671.5 1142.6 691.9 1148.9 706.9 C1155.1 721.8 1161.7 740.5 1163.2 745.0 C1164.6 749.5 1155.5 729.6 1157.4 734.0 C1159.4 738.4 1168.9 758.8 1174.6 771.2 C1180.4 783.7 1186.8 797.5 1191.8 808.5 C1196.9 819.5 1202.8 832.4 1205.0 837.1 M1080.1 735.5 C1089.7 732.7 1116.6 724.1 1137.4 718.3 C1158.2 712.6 1193.7 704.0 1205.0 701.1 M1160.3 745.0 L1205.0 732.7 M902.5 629.5 C906.3 628.1 917.8 623.6 925.4 620.9 C933.1 618.3 939.3 615.2 948.3 613.8 C957.4 612.3 974.6 612.6 979.8 612.3 M765.0 695.4 L782.2 689.7 M773.6 669.6 C775.5 675.8 782.2 694.3 785.1 706.9 C787.9 719.4 789.8 738.6 790.8 745.0 M342.2 734.0 C343.6 741.2 347.0 762.6 350.8 777.0 C354.6 791.3 361.8 805.6 365.1 819.9 C368.4 834.3 369.9 855.7 370.8 862.9 M330.7 785.6 L410.9 781.3 M330.7 860.0 L368.0 858.6 M419.5 908.7 C427.6 907.1 453.0 901.8 468.2 898.7 C483.5 895.6 500.2 889.4 511.2 890.1 C522.2 890.8 527.0 899.4 534.1 903.0 C541.3 906.6 543.7 911.4 554.2 911.6 C564.7 911.8 582.8 906.8 597.1 904.4 C611.5 902.1 625.8 901.3 640.1 897.3 C654.4 893.2 668.8 885.8 683.1 880.1 C697.4 874.4 712.4 868.2 726.0 862.9 C739.7 857.7 758.5 851.0 765.0 848.6 M465.4 944.0 C470.6 942.9 477.3 939.4 496.9 937.4 C516.4 935.3 558.9 934.3 582.8 931.7 C606.7 929.0 621.0 925.2 640.1 921.6 C659.2 918.0 682.1 912.8 697.4 910.2 C712.7 907.5 726.0 906.6 731.8 905.9 M628.6 834.3 C630.6 840.0 637.2 857.7 640.1 868.6 C643.0 879.6 643.4 889.2 645.8 900.1 C648.2 911.1 652.0 927.2 654.4 934.5 C656.8 941.8 659.2 942.4 660.2 944.0 M525.5 749.8 C533.2 748.6 557.0 745.0 571.4 742.6 C585.7 740.2 604.8 736.6 611.5 735.4 M770.7 838.6 C776.0 836.2 790.8 829.2 802.2 824.2 C813.7 819.2 825.6 811.8 839.5 808.5 C853.3 805.1 871.5 805.9 885.3 804.2 C899.2 802.5 909.2 802.5 922.6 798.5 C935.9 794.4 951.2 786.3 965.5 779.8 C979.8 773.4 994.2 765.0 1008.5 759.8 C1022.8 754.5 1038.1 752.1 1051.5 748.3 C1064.8 744.5 1079.1 739.3 1088.7 736.9 C1098.2 734.5 1105.4 734.5 1108.8 734.0 M945.5 860.0 C951.7 857.7 972.2 850.5 982.7 845.7 C993.2 840.9 998.9 836.2 1008.5 831.4 C1018.0 826.6 1029.0 821.4 1040.0 817.1 C1051.0 812.8 1060.5 810.2 1074.4 805.6 C1088.2 801.1 1110.2 794.2 1123.1 789.9 C1136.0 785.6 1146.9 781.5 1151.7 779.8 M1019.9 734.0 C1021.4 741.2 1025.2 763.1 1028.5 777.0 C1031.9 790.8 1038.1 810.4 1040.0 817.1 M1083.0 734.0 L1094.4 791.3 M1103.0 765.5 C1108.8 763.6 1124.0 758.8 1137.4 754.1 C1150.8 749.3 1175.6 739.7 1183.2 736.9 M1080.1 944.0 C1084.9 941.9 1099.2 935.1 1108.8 931.7 C1118.3 928.2 1132.6 924.5 1137.4 923.1 M1166.0 940.2 L1205.0 934.5" fill="none" stroke="rgba(95,95,30,0.5)" stroke-width="1.8" stroke-linecap="round" stroke-linejoin="round" stroke-dasharray="9 41"/>
<path d="M330.7 741.8 C341.7 740.4 376.1 736.0 396.6 733.2 C417.1 730.5 435.3 728.5 453.9 725.5 C472.5 722.5 493.5 719.4 508.3 715.5 C523.1 711.5 532.7 705.4 542.7 701.7 C552.7 698.0 556.6 695.8 568.5 693.1 C580.4 690.5 597.6 687.5 614.3 686.0 C631.0 684.4 651.1 685.7 668.8 684.0 C686.4 682.2 704.3 679.6 720.3 675.4 C736.4 671.2 754.7 662.6 765.0 658.8 C775.3 654.9 776.0 654.8 782.2 652.4 C788.4 650.1 798.9 645.8 802.2 644.4 M607.2 570.8 C607.6 579.2 609.1 605.4 610.0 620.9 C611.0 636.5 612.1 649.6 612.9 663.9 C613.7 678.2 614.2 695.2 614.9 706.9 C615.6 718.6 616.2 722.3 617.2 734.0 C618.2 745.7 620.0 764.1 620.9 777.0 C621.9 789.9 622.6 805.6 622.9 811.3 M368.0 669.6 C370.4 673.9 378.2 686.8 382.3 695.4 C386.3 704.0 389.4 714.8 392.3 721.2 C395.3 727.6 396.9 726.1 400.1 734.0 C403.2 741.9 406.7 755.0 410.9 768.4 C415.1 781.7 420.5 800.8 425.3 814.2 C430.0 827.6 435.8 837.1 439.6 848.6 C443.4 860.0 445.7 871.5 448.2 883.0 C450.7 894.4 452.1 907.2 454.5 917.3 C456.9 927.5 461.2 939.5 462.5 944.0 M954.1 570.8 C955.4 579.2 959.5 604.0 962.1 620.9 C964.7 637.9 967.3 655.8 969.8 672.5 C972.3 689.2 975.5 710.9 977.0 721.2 C978.4 731.4 977.2 725.7 978.4 734.0 C979.6 742.3 981.5 758.8 984.1 771.2 C986.8 783.7 990.6 796.5 994.2 808.5 C997.7 820.4 1002.8 835.0 1005.6 842.9 C1008.5 850.7 1009.2 851.0 1011.4 855.7 C1013.5 860.5 1016.7 863.1 1018.5 871.5 C1020.3 879.9 1021.0 893.8 1022.2 905.9 C1023.4 918.0 1025.1 937.6 1025.7 944.0 M1168.9 570.8 C1171.8 576.8 1180.4 595.8 1186.1 606.6 C1191.8 617.5 1200.4 631.0 1203.3 635.8 M330.7 740.3 C336.9 740.0 356.4 739.1 368.0 738.3 C379.5 737.5 394.7 735.9 400.1 735.4" fill="none" stroke="#c99a58" stroke-width="4.5" stroke-linecap="round" stroke-linejoin="round"/>
<path d="M330.7 741.8 C341.7 740.4 376.1 736.0 396.6 733.2 C417.1 730.5 435.3 728.5 453.9 725.5 C472.5 722.5 493.5 719.4 508.3 715.5 C523.1 711.5 532.7 705.4 542.7 701.7 C552.7 698.0 556.6 695.8 568.5 693.1 C580.4 690.5 597.6 687.5 614.3 686.0 C631.0 684.4 651.1 685.7 668.8 684.0 C686.4 682.2 704.3 679.6 720.3 675.4 C736.4 671.2 754.7 662.6 765.0 658.8 C775.3 654.9 776.0 654.8 782.2 652.4 C788.4 650.1 798.9 645.8 802.2 644.4 M607.2 570.8 C607.6 579.2 609.1 605.4 610.0 620.9 C611.0 636.5 612.1 649.6 612.9 663.9 C613.7 678.2 614.2 695.2 614.9 706.9 C615.6 718.6 616.2 722.3 617.2 734.0 C618.2 745.7 620.0 764.1 620.9 777.0 C621.9 789.9 622.6 805.6 622.9 811.3 M368.0 669.6 C370.4 673.9 378.2 686.8 382.3 695.4 C386.3 704.0 389.4 714.8 392.3 721.2 C395.3 727.6 396.9 726.1 400.1 734.0 C403.2 741.9 406.7 755.0 410.9 768.4 C415.1 781.7 420.5 800.8 425.3 814.2 C430.0 827.6 435.8 837.1 439.6 848.6 C443.4 860.0 445.7 871.5 448.2 883.0 C450.7 894.4 452.1 907.2 454.5 917.3 C456.9 927.5 461.2 939.5 462.5 944.0 M954.1 570.8 C955.4 579.2 959.5 604.0 962.1 620.9 C964.7 637.9 967.3 655.8 969.8 672.5 C972.3 689.2 975.5 710.9 977.0 721.2 C978.4 731.4 977.2 725.7 978.4 734.0 C979.6 742.3 981.5 758.8 984.1 771.2 C986.8 783.7 990.6 796.5 994.2 808.5 C997.7 820.4 1002.8 835.0 1005.6 842.9 C1008.5 850.7 1009.2 851.0 1011.4 855.7 C1013.5 860.5 1016.7 863.1 1018.5 871.5 C1020.3 879.9 1021.0 893.8 1022.2 905.9 C1023.4 918.0 1025.1 937.6 1025.7 944.0 M1168.9 570.8 C1171.8 576.8 1180.4 595.8 1186.1 606.6 C1191.8 617.5 1200.4 631.0 1203.3 635.8 M330.7 740.3 C336.9 740.0 356.4 739.1 368.0 738.3 C379.5 737.5 394.7 735.9 400.1 735.4" fill="none" stroke="#f5cf98" stroke-width="3.5" stroke-linecap="round" stroke-linejoin="round"/>
<path d="M330.7 741.8 C341.7 740.4 376.1 736.0 396.6 733.2 C417.1 730.5 435.3 728.5 453.9 725.5 C472.5 722.5 493.5 719.4 508.3 715.5 C523.1 711.5 532.7 705.4 542.7 701.7 C552.7 698.0 556.6 695.8 568.5 693.1 C580.4 690.5 597.6 687.5 614.3 686.0 C631.0 684.4 651.1 685.7 668.8 684.0 C686.4 682.2 704.3 679.6 720.3 675.4 C736.4 671.2 754.7 662.6 765.0 658.8 C775.3 654.9 776.0 654.8 782.2 652.4 C788.4 650.1 798.9 645.8 802.2 644.4 M607.2 570.8 C607.6 579.2 609.1 605.4 610.0 620.9 C611.0 636.5 612.1 649.6 612.9 663.9 C613.7 678.2 614.2 695.2 614.9 706.9 C615.6 718.6 616.2 722.3 617.2 734.0 C618.2 745.7 620.0 764.1 620.9 777.0 C621.9 789.9 622.6 805.6 622.9 811.3 M368.0 669.6 C370.4 673.9 378.2 686.8 382.3 695.4 C386.3 704.0 389.4 714.8 392.3 721.2 C395.3 727.6 396.9 726.1 400.1 734.0 C403.2 741.9 406.7 755.0 410.9 768.4 C415.1 781.7 420.5 800.8 425.3 814.2 C430.0 827.6 435.8 837.1 439.6 848.6 C443.4 860.0 445.7 871.5 448.2 883.0 C450.7 894.4 452.1 907.2 454.5 917.3 C456.9 927.5 461.2 939.5 462.5 944.0 M954.1 570.8 C955.4 579.2 959.5 604.0 962.1 620.9 C964.7 637.9 967.3 655.8 969.8 672.5 C972.3 689.2 975.5 710.9 977.0 721.2 C978.4 731.4 977.2 725.7 978.4 734.0 C979.6 742.3 981.5 758.8 984.1 771.2 C986.8 783.7 990.6 796.5 994.2 808.5 C997.7 820.4 1002.8 835.0 1005.6 842.9 C1008.5 850.7 1009.2 851.0 1011.4 855.7 C1013.5 860.5 1016.7 863.1 1018.5 871.5 C1020.3 879.9 1021.0 893.8 1022.2 905.9 C1023.4 918.0 1025.1 937.6 1025.7 944.0 M1168.9 570.8 C1171.8 576.8 1180.4 595.8 1186.1 606.6 C1191.8 617.5 1200.4 631.0 1203.3 635.8 M330.7 740.3 C336.9 740.0 356.4 739.1 368.0 738.3 C379.5 737.5 394.7 735.9 400.1 735.4" fill="none" stroke="rgba(110,70,20,0.5)" stroke-width="1.8" stroke-linecap="round" stroke-linejoin="round" stroke-dasharray="9 47"/>
<path d="M330.7 690.3 C336.9 688.3 357.0 681.8 368.0 678.2 C378.9 674.7 388.0 672.3 396.6 669.1 C405.2 665.8 412.4 661.5 419.5 658.8 C426.7 656.0 433.4 654.2 439.6 652.4 C445.8 650.7 449.1 651.0 456.8 648.2 C464.4 645.3 476.3 639.2 485.4 635.3 C494.5 631.3 501.6 627.7 511.2 624.4 C520.7 621.0 533.2 619.2 542.7 615.2 C552.3 611.2 558.9 605.1 568.5 600.3 C578.0 595.5 589.0 590.3 600.0 586.6 C611.0 582.8 623.4 580.6 634.4 578.0 C645.4 575.3 660.6 572.0 665.9 570.8 M484.0 570.8 C484.9 574.4 487.7 584.4 489.7 592.3 C491.8 600.2 494.4 610.0 496.3 618.1 C498.2 626.2 499.2 632.4 501.2 641.0 C503.2 649.6 506.2 660.6 508.3 669.6 C510.5 678.7 512.2 686.8 514.1 695.4 C516.0 704.0 518.1 712.9 519.8 721.2 C521.5 729.5 522.9 738.1 524.1 745.0 C525.3 751.9 525.3 754.9 527.0 762.6 C528.6 770.4 531.9 782.7 534.1 791.3 C536.4 799.9 538.1 807.0 540.4 814.2 C542.7 821.4 545.6 828.5 547.9 834.3 C550.2 840.0 551.4 841.4 554.2 848.6 C556.9 855.7 560.9 867.7 564.2 877.2 C567.5 886.8 570.9 894.8 574.2 905.9 C577.6 917.0 582.6 937.6 584.2 944.0 M419.5 873.5 C423.8 872.7 437.2 870.4 445.3 868.6 C453.4 866.9 457.7 865.7 468.2 862.9 C478.7 860.1 495.0 856.8 508.3 852.0 C521.7 847.2 536.0 839.0 548.4 834.3 C560.9 829.5 570.9 827.0 582.8 823.4 C594.7 819.8 606.7 817.2 620.1 812.8 C633.4 808.4 649.2 803.5 663.0 797.0 C676.9 790.6 692.6 780.2 703.1 774.1 C713.6 768.0 718.9 764.4 726.0 760.4 C733.2 756.3 739.6 752.8 746.1 749.8 C752.6 746.7 754.7 744.7 765.0 741.8 C775.3 739.0 793.6 736.7 808.0 732.7 C822.3 728.6 835.2 722.2 850.9 717.5 C866.7 712.8 885.3 709.1 902.5 704.6 C919.7 700.0 935.9 694.6 954.1 690.3 C972.2 686.0 990.8 681.3 1011.4 678.8 C1031.9 676.3 1058.6 678.2 1077.2 675.4 C1095.9 672.5 1108.3 667.2 1123.1 661.6 C1137.9 656.0 1156.0 645.7 1166.0 641.6 C1176.1 637.4 1176.7 637.2 1183.2 636.7 C1189.7 636.2 1201.4 638.4 1205.0 638.7 M724.6 570.8 C724.5 579.2 724.1 606.9 723.8 620.9 C723.4 635.0 723.4 642.9 722.6 655.3 C721.8 667.7 720.3 683.0 718.9 695.4 C717.4 707.8 714.7 723.4 714.0 729.8 C713.3 736.2 715.2 728.5 714.6 734.0 C714.0 739.5 711.7 750.7 710.3 762.6 C708.9 774.6 706.3 791.3 706.0 805.6 C705.7 819.9 706.8 834.3 708.3 848.6 C709.8 862.9 712.3 878.2 715.2 891.6 C718.0 904.9 722.7 920.1 725.5 928.8 C728.2 937.5 730.7 941.4 731.8 944.0" fill="none" stroke="#c8775a" stroke-width="5.6" stroke-linecap="round" stroke-linejoin="round"/>
<path d="M330.7 690.3 C336.9 688.3 357.0 681.8 368.0 678.2 C378.9 674.7 388.0 672.3 396.6 669.1 C405.2 665.8 412.4 661.5 419.5 658.8 C426.7 656.0 433.4 654.2 439.6 652.4 C445.8 650.7 449.1 651.0 456.8 648.2 C464.4 645.3 476.3 639.2 485.4 635.3 C494.5 631.3 501.6 627.7 511.2 624.4 C520.7 621.0 533.2 619.2 542.7 615.2 C552.3 611.2 558.9 605.1 568.5 600.3 C578.0 595.5 589.0 590.3 600.0 586.6 C611.0 582.8 623.4 580.6 634.4 578.0 C645.4 575.3 660.6 572.0 665.9 570.8 M484.0 570.8 C484.9 574.4 487.7 584.4 489.7 592.3 C491.8 600.2 494.4 610.0 496.3 618.1 C498.2 626.2 499.2 632.4 501.2 641.0 C503.2 649.6 506.2 660.6 508.3 669.6 C510.5 678.7 512.2 686.8 514.1 695.4 C516.0 704.0 518.1 712.9 519.8 721.2 C521.5 729.5 522.9 738.1 524.1 745.0 C525.3 751.9 525.3 754.9 527.0 762.6 C528.6 770.4 531.9 782.7 534.1 791.3 C536.4 799.9 538.1 807.0 540.4 814.2 C542.7 821.4 545.6 828.5 547.9 834.3 C550.2 840.0 551.4 841.4 554.2 848.6 C556.9 855.7 560.9 867.7 564.2 877.2 C567.5 886.8 570.9 894.8 574.2 905.9 C577.6 917.0 582.6 937.6 584.2 944.0 M419.5 873.5 C423.8 872.7 437.2 870.4 445.3 868.6 C453.4 866.9 457.7 865.7 468.2 862.9 C478.7 860.1 495.0 856.8 508.3 852.0 C521.7 847.2 536.0 839.0 548.4 834.3 C560.9 829.5 570.9 827.0 582.8 823.4 C594.7 819.8 606.7 817.2 620.1 812.8 C633.4 808.4 649.2 803.5 663.0 797.0 C676.9 790.6 692.6 780.2 703.1 774.1 C713.6 768.0 718.9 764.4 726.0 760.4 C733.2 756.3 739.6 752.8 746.1 749.8 C752.6 746.7 754.7 744.7 765.0 741.8 C775.3 739.0 793.6 736.7 808.0 732.7 C822.3 728.6 835.2 722.2 850.9 717.5 C866.7 712.8 885.3 709.1 902.5 704.6 C919.7 700.0 935.9 694.6 954.1 690.3 C972.2 686.0 990.8 681.3 1011.4 678.8 C1031.9 676.3 1058.6 678.2 1077.2 675.4 C1095.9 672.5 1108.3 667.2 1123.1 661.6 C1137.9 656.0 1156.0 645.7 1166.0 641.6 C1176.1 637.4 1176.7 637.2 1183.2 636.7 C1189.7 636.2 1201.4 638.4 1205.0 638.7 M724.6 570.8 C724.5 579.2 724.1 606.9 723.8 620.9 C723.4 635.0 723.4 642.9 722.6 655.3 C721.8 667.7 720.3 683.0 718.9 695.4 C717.4 707.8 714.7 723.4 714.0 729.8 C713.3 736.2 715.2 728.5 714.6 734.0 C714.0 739.5 711.7 750.7 710.3 762.6 C708.9 774.6 706.3 791.3 706.0 805.6 C705.7 819.9 706.8 834.3 708.3 848.6 C709.8 862.9 712.3 878.2 715.2 891.6 C718.0 904.9 722.7 920.1 725.5 928.8 C728.2 937.5 730.7 941.4 731.8 944.0" fill="none" stroke="#eda68c" stroke-width="4.5" stroke-linecap="round" stroke-linejoin="round"/>
<path d="M330.7 690.3 C336.9 688.3 357.0 681.8 368.0 678.2 C378.9 674.7 388.0 672.3 396.6 669.1 C405.2 665.8 412.4 661.5 419.5 658.8 C426.7 656.0 433.4 654.2 439.6 652.4 C445.8 650.7 449.1 651.0 456.8 648.2 C464.4 645.3 476.3 639.2 485.4 635.3 C494.5 631.3 501.6 627.7 511.2 624.4 C520.7 621.0 533.2 619.2 542.7 615.2 C552.3 611.2 558.9 605.1 568.5 600.3 C578.0 595.5 589.0 590.3 600.0 586.6 C611.0 582.8 623.4 580.6 634.4 578.0 C645.4 575.3 660.6 572.0 665.9 570.8 M484.0 570.8 C484.9 574.4 487.7 584.4 489.7 592.3 C491.8 600.2 494.4 610.0 496.3 618.1 C498.2 626.2 499.2 632.4 501.2 641.0 C503.2 649.6 506.2 660.6 508.3 669.6 C510.5 678.7 512.2 686.8 514.1 695.4 C516.0 704.0 518.1 712.9 519.8 721.2 C521.5 729.5 522.9 738.1 524.1 745.0 C525.3 751.9 525.3 754.9 527.0 762.6 C528.6 770.4 531.9 782.7 534.1 791.3 C536.4 799.9 538.1 807.0 540.4 814.2 C542.7 821.4 545.6 828.5 547.9 834.3 C550.2 840.0 551.4 841.4 554.2 848.6 C556.9 855.7 560.9 867.7 564.2 877.2 C567.5 886.8 570.9 894.8 574.2 905.9 C577.6 917.0 582.6 937.6 584.2 944.0 M419.5 873.5 C423.8 872.7 437.2 870.4 445.3 868.6 C453.4 866.9 457.7 865.7 468.2 862.9 C478.7 860.1 495.0 856.8 508.3 852.0 C521.7 847.2 536.0 839.0 548.4 834.3 C560.9 829.5 570.9 827.0 582.8 823.4 C594.7 819.8 606.7 817.2 620.1 812.8 C633.4 808.4 649.2 803.5 663.0 797.0 C676.9 790.6 692.6 780.2 703.1 774.1 C713.6 768.0 718.9 764.4 726.0 760.4 C733.2 756.3 739.6 752.8 746.1 749.8 C752.6 746.7 754.7 744.7 765.0 741.8 C775.3 739.0 793.6 736.7 808.0 732.7 C822.3 728.6 835.2 722.2 850.9 717.5 C866.7 712.8 885.3 709.1 902.5 704.6 C919.7 700.0 935.9 694.6 954.1 690.3 C972.2 686.0 990.8 681.3 1011.4 678.8 C1031.9 676.3 1058.6 678.2 1077.2 675.4 C1095.9 672.5 1108.3 667.2 1123.1 661.6 C1137.9 656.0 1156.0 645.7 1166.0 641.6 C1176.1 637.4 1176.7 637.2 1183.2 636.7 C1189.7 636.2 1201.4 638.4 1205.0 638.7 M724.6 570.8 C724.5 579.2 724.1 606.9 723.8 620.9 C723.4 635.0 723.4 642.9 722.6 655.3 C721.8 667.7 720.3 683.0 718.9 695.4 C717.4 707.8 714.7 723.4 714.0 729.8 C713.3 736.2 715.2 728.5 714.6 734.0 C714.0 739.5 711.7 750.7 710.3 762.6 C708.9 774.6 706.3 791.3 706.0 805.6 C705.7 819.9 706.8 834.3 708.3 848.6 C709.8 862.9 712.3 878.2 715.2 891.6 C718.0 904.9 722.7 920.1 725.5 928.8 C728.2 937.5 730.7 941.4 731.8 944.0" fill="none" stroke="rgba(120,50,30,0.45)" stroke-width="1.8" stroke-linecap="round" stroke-linejoin="round" stroke-dasharray="10 52"/>
<path d="M807.4 570.8 C807.5 579.2 807.4 605.4 808.0 620.9 C808.5 636.5 809.8 650.5 810.8 663.9 C811.9 677.3 813.2 690.2 814.3 701.1 C815.3 712.1 816.5 724.3 817.1 729.8 C817.8 735.3 817.4 723.8 818.0 734.0 C818.6 744.2 820.1 772.2 820.9 791.3 C821.6 810.4 821.8 831.4 822.3 848.6 C822.8 865.8 823.2 878.5 823.7 894.4 C824.2 910.3 824.9 935.7 825.2 944.0 M591.4 948.3 C596.7 946.8 612.4 942.8 622.9 939.7 C633.4 936.5 642.0 932.3 654.4 929.4 C666.8 926.5 683.1 924.1 697.4 922.2 C711.7 920.3 729.1 919.9 740.4 917.9 C751.6 915.9 753.7 912.1 765.0 910.5 C776.3 908.8 793.6 908.8 808.0 907.9 C822.3 906.9 836.6 906.5 850.9 904.7 C865.3 903.0 879.6 900.8 893.9 897.3 C908.2 893.7 922.6 888.7 936.9 883.5 C951.2 878.4 965.5 872.2 979.8 866.3 C994.2 860.5 1008.5 854.8 1022.8 848.6 C1037.1 842.4 1051.5 834.7 1065.8 829.1 C1080.1 823.5 1094.4 820.0 1108.8 814.8 C1123.1 809.5 1135.7 804.0 1151.7 797.6 C1167.8 791.1 1196.1 779.7 1205.0 776.1" fill="none" stroke="#c9607c" stroke-width="6.0" stroke-linecap="round" stroke-linejoin="round"/>
<path d="M807.4 570.8 C807.5 579.2 807.4 605.4 808.0 620.9 C808.5 636.5 809.8 650.5 810.8 663.9 C811.9 677.3 813.2 690.2 814.3 701.1 C815.3 712.1 816.5 724.3 817.1 729.8 C817.8 735.3 817.4 723.8 818.0 734.0 C818.6 744.2 820.1 772.2 820.9 791.3 C821.6 810.4 821.8 831.4 822.3 848.6 C822.8 865.8 823.2 878.5 823.7 894.4 C824.2 910.3 824.9 935.7 825.2 944.0 M591.4 948.3 C596.7 946.8 612.4 942.8 622.9 939.7 C633.4 936.5 642.0 932.3 654.4 929.4 C666.8 926.5 683.1 924.1 697.4 922.2 C711.7 920.3 729.1 919.9 740.4 917.9 C751.6 915.9 753.7 912.1 765.0 910.5 C776.3 908.8 793.6 908.8 808.0 907.9 C822.3 906.9 836.6 906.5 850.9 904.7 C865.3 903.0 879.6 900.8 893.9 897.3 C908.2 893.7 922.6 888.7 936.9 883.5 C951.2 878.4 965.5 872.2 979.8 866.3 C994.2 860.5 1008.5 854.8 1022.8 848.6 C1037.1 842.4 1051.5 834.7 1065.8 829.1 C1080.1 823.5 1094.4 820.0 1108.8 814.8 C1123.1 809.5 1135.7 804.0 1151.7 797.6 C1167.8 791.1 1196.1 779.7 1205.0 776.1" fill="none" stroke="#e28fa1" stroke-width="4.9" stroke-linecap="round" stroke-linejoin="round"/>
<circle cx="547.9" cy="834.3" r="3.0" fill="#efa98e"/><circle cx="547.9" cy="834.3" r="5.5" fill="none" stroke="#efa98e" stroke-width="1.6"/>
<circle cx="496.9" cy="620.9" r="2.2" fill="#efa98e"/>
<circle cx="459.6" cy="649.6" r="1.9" fill="#efa98e"/>
<ellipse cx="817.1" cy="730.4" rx="5.5" ry="9" fill="#e08da0" stroke="#c9607c" stroke-width=".6"/><ellipse cx="817.1" cy="742.4" rx="3.2" ry="6" fill="#e08da0"/>
<ellipse cx="823.2" cy="909.3" rx="9" ry="6" fill="#e08da0" stroke="#c9607c" stroke-width=".6"/>
<circle cx="708.9" cy="765.5" r="2.5" fill="#efa98e"/><circle cx="708.9" cy="765.5" r="4.5" fill="none" stroke="#efa98e" stroke-width="1.6"/>
<circle cx="808.0" cy="609.5" r="1.9" fill="#e28fa1"/>
<ellipse cx="1011.4" cy="857.8" rx="5.5" ry="8" fill="none" stroke="#f5cf98" stroke-width="2" transform="rotate(-15 1011.4 857.8)"/>
</g><g filter="url(#lb)">
<text x="675.9" y="653.7" text-anchor="middle" font-size="9.5" fill="#4a4a4a" opacity=".9">张江镇</text>
<text x="467.4" y="623.9" text-anchor="middle" font-size="8" fill="#8a7a7a">上海新国</text>
<text x="467.4" y="632.5" text-anchor="middle" font-size="8" fill="#8a7a7a">际博览中</text>
<text x="467.4" y="641.1" text-anchor="middle" font-size="8" fill="#8a7a7a">心</text>
<text x="493.4" y="608.8" text-anchor="middle" font-size="7.5" fill="#b5342d" opacity=".9">罗山高架路</text>
<text x="577.9" y="597.4" text-anchor="middle" font-size="7.5" fill="#b5342d" opacity=".9">金科路</text>
<text x="541.3" y="618.9" text-anchor="middle" font-size="7.5" fill="#b5342d" opacity=".9">科苑路</text>
<text x="478.3" y="647.5" text-anchor="middle" font-size="7.5" fill="#b5342d" opacity=".9">罗山高架路</text>
<text x="507.5" y="672.7" text-anchor="middle" font-size="7.5" fill="#b5342d" opacity=".9">内环高架路;龙东高架路</text>
<text x="510.6" y="694.5" text-anchor="middle" font-size="7.5" fill="#b5342d" opacity=".9">高科中(西)路</text>
<text x="723.8" y="592.8" text-anchor="middle" font-size="7.5" fill="#b5342d" opacity=".9">龙东高架路</text>
<text x="724.6" y="578.8" text-anchor="middle" font-size="7.5" fill="#b5342d" opacity=".9">申江路</text>
<text x="723.2" y="643.8" text-anchor="middle" font-size="7.5" fill="#b5342d" opacity=".9">高科中路</text>
<text x="718.9" y="712.0" text-anchor="middle" font-size="7.5" fill="#b5342d" opacity=".9">高科中路</text>
<text x="353.6" y="691.9" text-anchor="middle" font-size="7.5" fill="#b5342d" opacity=".9">浦建路;沪南路</text>
<rect x="647.6" y="601.4" width="24" height="11" rx="2" fill="#f6e3c0" stroke="#b9a37c" stroke-width=".6"/><text x="659.6" y="609.7" text-anchor="middle" font-size="7.5" fill="#6a5a3a">S101</text>
<text x="858.1" y="637.9" text-anchor="middle" font-size="9.5" fill="#4a4a4a" opacity=".9">唐镇</text>
<text x="975.5" y="664.0" text-anchor="middle" font-size="9.5" fill="#4a4a4a" opacity=".9">药师村</text>
<text x="1043.4" y="717.0" text-anchor="middle" font-size="9.5" fill="#4a4a4a" opacity=".9">川沙新镇</text>
<text x="1036.6" y="582.3" text-anchor="middle" font-size="9.5" fill="#4a4a4a" opacity=".9">暮紫桥</text>
<text x="1179.8" y="610.1" text-anchor="middle" font-size="9.5" fill="#4a4a4a" opacity=".9">蔡路村</text>
<text x="793.6" y="588.6" text-anchor="middle" font-size="9.5" fill="#4a4a4a" opacity=".9">吕三</text>
<text x="807.1" y="622.3" text-anchor="middle" font-size="7.5" fill="#b5342d" opacity=".9">高科东路</text>
<text x="810.8" y="663.8" text-anchor="middle" font-size="7.5" fill="#b5342d" opacity=".9">高科东路</text>
<text x="813.1" y="692.8" text-anchor="middle" font-size="7.5" fill="#b5342d" opacity=".9">华夏西路立交</text>
<text x="863.0" y="717.7" text-anchor="middle" font-size="7.5" fill="#b5342d" opacity=".9">唐黄路</text>
<text x="1166.6" y="644.1" text-anchor="middle" font-size="7.5" fill="#b5342d" opacity=".9">川南奉公路</text>
<rect x="906.3" y="695.1" width="24" height="11" rx="2" fill="#f6e3c0" stroke="#b9a37c" stroke-width=".6"/><text x="918.3" y="703.4" text-anchor="middle" font-size="7.5" fill="#6a5a3a">S101</text>
<text x="408.9" y="775.6" text-anchor="middle" font-size="9.5" fill="#4a4a4a" opacity=".9">北蔡镇</text>
<text x="749.0" y="795.7" text-anchor="middle" font-size="9.5" fill="#4a4a4a" opacity=".9">孙桥</text>
<text x="456.2" y="922.8" text-anchor="middle" font-size="9.5" fill="#4a4a4a" opacity=".9">御桥</text>
<text x="533.5" y="790.1" text-anchor="middle" font-size="7.5" fill="#b5342d" opacity=".9">高科西(中)路;张衡路;祖冲之路</text>
<text x="675.9" y="792.9" text-anchor="middle" font-size="7.5" fill="#b5342d" opacity=".9">华夏高架路;迎宾区高架路</text>
<text x="650.1" y="803.5" text-anchor="middle" font-size="7.5" fill="#b5342d" opacity=".9">金科路</text>
<text x="571.4" y="829.3" text-anchor="middle" font-size="7.5" fill="#b5342d" opacity=".9">罗山高架路</text>
<text x="556.5" y="857.7" text-anchor="middle" font-size="7.5" fill="#b5342d" opacity=".9">华夏西(中)路</text>
<text x="559.9" y="868.6" text-anchor="middle" font-size="7.5" fill="#b5342d" opacity=".9">中环路</text>
<text x="477.4" y="868.0" text-anchor="middle" font-size="7.5" fill="#b5342d" opacity=".9">沪南路</text>
<text x="704.8" y="845.9" text-anchor="middle" font-size="7.5" fill="#b5342d" opacity=".9">秀沈路</text>
<text x="731.8" y="756.9" text-anchor="middle" font-size="7.5" fill="#b5342d" opacity=".9">中环路;迎宾区高架路</text>
<text x="730.3" y="915.8" text-anchor="middle" font-size="7.5" fill="#b5342d" opacity=".9">申江路</text>
<text x="921.1" y="870.1" text-anchor="middle" font-size="9.5" fill="#4a4a4a" opacity=".9">黄楼</text>
<text x="790.8" y="932.3" text-anchor="middle" font-size="9.5" fill="#4a4a4a" opacity=".9">横沔</text>
<text x="1149.7" y="922.6" text-anchor="middle" font-size="9.5" fill="#4a4a4a" opacity=".9">六团</text>
<text x="822.3" y="872.6" text-anchor="middle" font-size="7.5" fill="#b5342d" opacity=".9">环东二大道立交桥</text>
<text x="848.1" y="905.8" text-anchor="middle" font-size="7.5" fill="#b5342d" opacity=".9">环东二大道立交桥</text>
<text x="929.7" y="889.5" text-anchor="middle" font-size="7.5" fill="#b5342d" opacity=".9">唐黄路</text>
<text x="974.1" y="870.9" text-anchor="middle" font-size="7.5" fill="#b5342d" opacity=".9">唐黄路</text>
<text x="1031.4" y="847.1" text-anchor="middle" font-size="7.5" fill="#b5342d" opacity=".9">华东路立交桥</text>
<text x="1096.7" y="820.2" text-anchor="middle" font-size="7.5" fill="#b5342d" opacity=".9">川沙路</text>
<text x="1167.5" y="792.1" text-anchor="middle" font-size="7.5" fill="#b5342d" opacity=".9">顾江路</text>
<text x="804.2" y="748.8" text-anchor="middle" font-size="7.5" fill="#b5342d" opacity=".9">华夏</text>
<rect x="811.4" y="798.1" width="20" height="11" rx="2" fill="#f0c0cc" stroke="#b87a8c" stroke-width=".6"/><text x="821.4" y="806.4" text-anchor="middle" font-size="7.5" fill="#7a3a4a">S20</text>
</g>
<circle cx="851.2" cy="581" r="31.6" fill="rgba(214,50,70,0.42)" stroke="rgba(200,40,60,0.8)" stroke-width="1"/>
<circle cx="826.7" cy="591.8" r="4.6" fill="rgba(70,45,55,0.72)" stroke="#3a2a30" stroke-width="1.2"/>
<text x="866.5" y="585.3" font-size="13" fill="#c4283a" letter-spacing=".4">945 kWh</text>
<text x="842.8" y="596" font-size="13" fill="#2a2326" letter-spacing=".3">0 kWh</text>
</g></svg>

<div class="abs" style="left:339px;top:579px;width:20px;height:20px;background:#2a2c31;border-radius:2px 2px 0 0"></div>
<div class="abs" style="left:339px;top:601px;width:20px;height:19px;background:#2a2c31;border-radius:0 0 2px 2px"></div>
<svg style="left:344.2px;top:585.5px" width="10" height="30" viewBox="0 0 10 30" stroke="#d0d0da" stroke-width="1.7" fill="none"><path d="M1.2 4.6H8.2M4.7 1.1V8.1M1.4 25.7H8"/></svg>
<!--/ROW3-->
</div>
</body>
</html>
